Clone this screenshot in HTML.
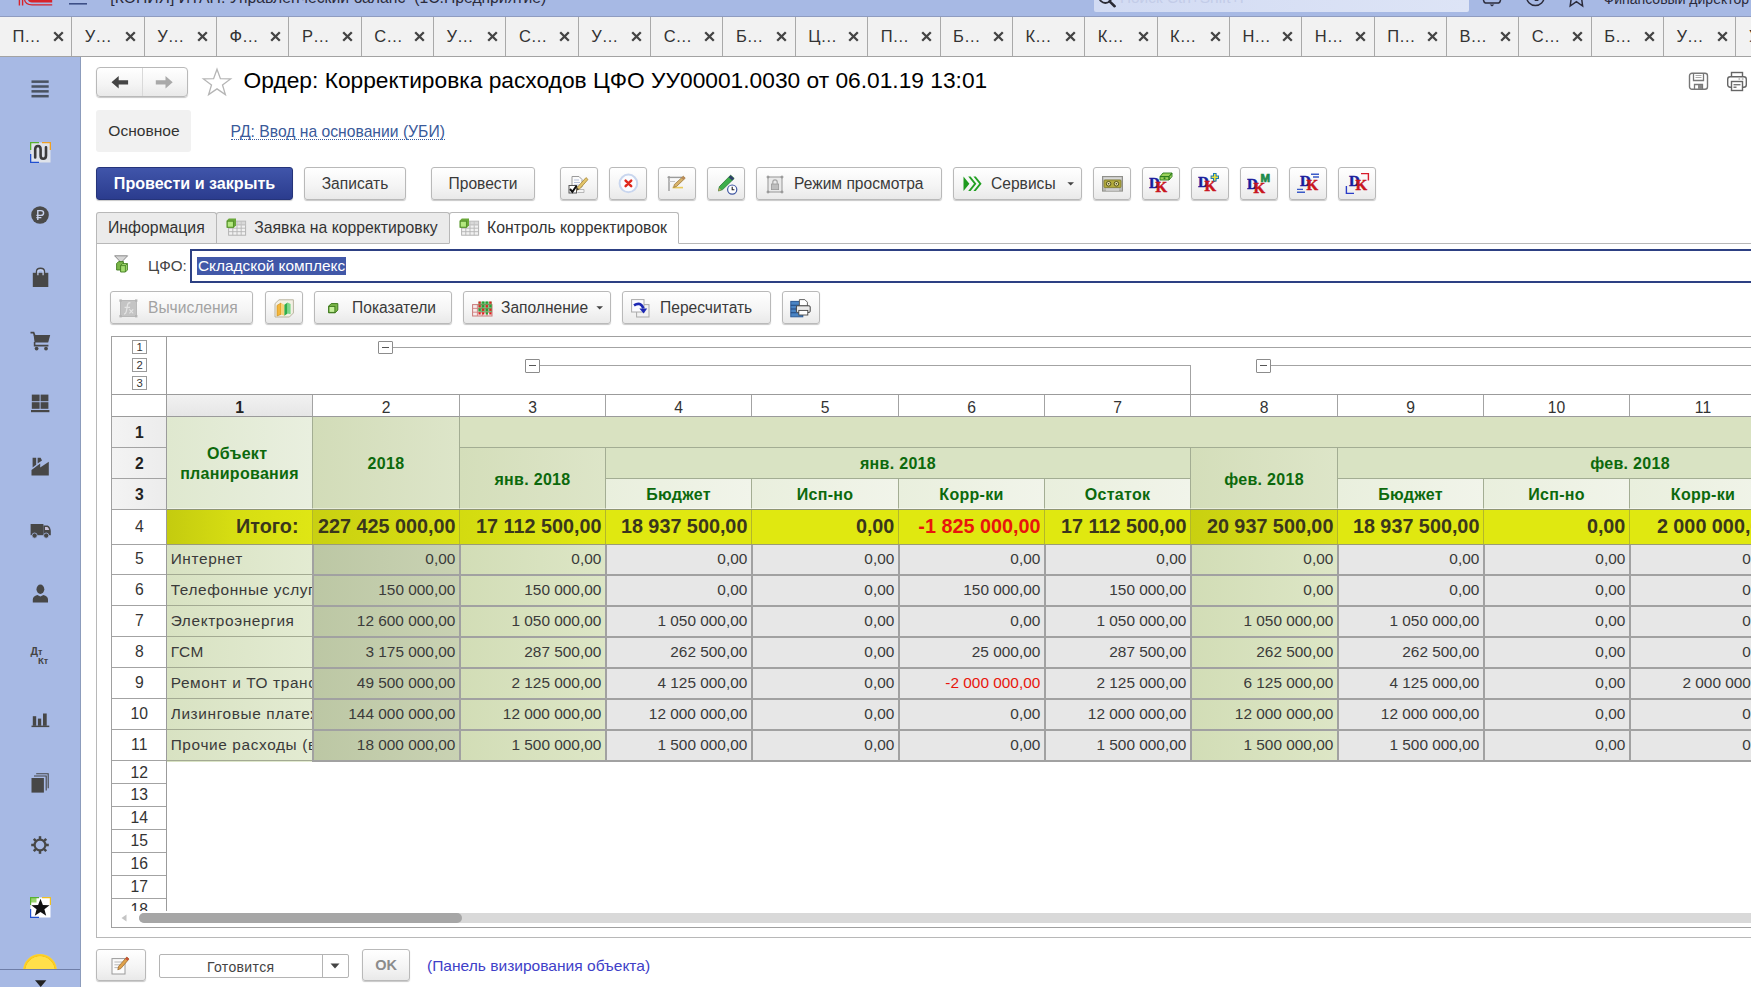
<!DOCTYPE html><html><head><meta charset="utf-8"><title>1C</title><style>
*{box-sizing:border-box;margin:0;padding:0}
html,body{width:1751px;height:987px;overflow:hidden;background:#fff}
body{font-family:"Liberation Sans",sans-serif;font-size:15.6px;color:#333;position:relative}
.abs{position:absolute}
.topbar{left:0;top:0;width:1751px;height:16px;background:#a7b9e4;overflow:hidden}
.tabsbar{left:0;top:16px;width:1751px;height:41px;background:#f2f2f2;border-top:1px solid #8f9cc0;border-bottom:1px solid #a3a3a3;overflow:hidden}
.tab{position:absolute;top:0;height:39px;border-right:1px solid #a9a9a9;font-size:17px;color:#333;line-height:39px;white-space:nowrap}
.tab .l{position:absolute;left:12.5px;top:0;font-size:16.5px}
.tab .x{position:absolute;left:52.5px;top:14px}
.sidebar{left:0;top:57px;width:80px;height:930px;background:#a7b9e4}
.btn{position:absolute;border:1px solid #b9b9b9;border-radius:3px;background:linear-gradient(#ffffff,#f4f4f4 60%,#e9e9e9);box-shadow:0 1px 1px rgba(0,0,0,.22);white-space:nowrap;color:#3a3a3a;text-align:center}
.btn.primary{background:linear-gradient(#4055aa,#2b3c8e);border-color:#25347a;color:#fff;font-weight:bold}
.t{position:absolute;white-space:nowrap}
</style></head><body>
<div class="abs topbar">
<svg class="abs" style="left:16px;top:0" width="80" height="10" viewBox="0 0 80 10"><path d="M3.4 0 V5.6 M6.6 0 V5.6" stroke="#d8232a" stroke-width="1.4" fill="none"/><path d="M12 0 Q12.6 2.4 16 2.4 H36.2 V0 Z" fill="#d8232a"/><path d="M8.6 0 Q9.4 4.8 16 4.8 H36.2" stroke="#d8232a" stroke-width="1.3" fill="none"/><path d="M53 3.8 H71" stroke="#3d4f86" stroke-width="1.6"/></svg>
<div class="t" style="left:110.3px;top:-10.6px;font-size:15.75px;color:#2b2b3a">[КОПИЯ] ИТАН: Управленческий баланс&nbsp; (1С:Предприятие)</div>
<div class="abs" style="left:1093.5px;top:-14px;width:375.5px;height:26.3px;background:linear-gradient(90deg,#d2dbf3,#dde4f6);border-radius:2px"></div>
<svg class="abs" style="left:1096px;top:0" width="22" height="8" viewBox="0 0 22 8"><circle cx="9.4" cy="-3.2" r="6.2" fill="none" stroke="#2b2b35" stroke-width="1.8"/><path d="M13.6 1.4 L18.6 6.2" stroke="#2b2b35" stroke-width="2.6" stroke-linecap="round"/></svg>
<div class="t" style="left:1120px;top:-10.6px;font-size:15.4px;color:#c3cce8">Поиск Ctrl+Shift+F</div>
<svg class="abs" style="left:1480px;top:0" width="110" height="9" viewBox="0 0 110 9"><path d="M3.4 0 Q4 2.6 5.4 3 H18.6 Q20 2.6 20.6 0" stroke="#2b2b3a" stroke-width="1.5" fill="none"/><path d="M9.6 4.6 H14.4 L12 6.4 Z" fill="#2b2b3a"/><path d="M46.6 -3.2 A8.8 8.8 0 0 0 64.2 -3.2" stroke="#2b2b3a" stroke-width="1.5" fill="none"/><path d="M55.4 -3 V0.4 H58.4" stroke="#2b2b3a" stroke-width="1.4" fill="none"/><path d="M91 0 L90.2 6 L96.4 1.6 L102.6 6 L101.8 0" stroke="#2b2b3a" stroke-width="1.5" fill="none"/></svg>
<div class="t" style="left:1603.5px;top:-9.5px;font-size:14px;color:#2b2b3a">Финансовый директор</div>
</div>
<div class="abs tabsbar">
<div class="tab" style="left:0.00px;width:72.35px"><span class="l">П…</span><svg class="x" width="11" height="11" viewBox="0 0 11 11"><path d="M1.2 1.2 L9.8 9.8 M9.8 1.2 L1.2 9.8" stroke="#444" stroke-width="2.3" fill="none"/></svg></div>
<div class="tab" style="left:72.35px;width:72.35px"><span class="l">У…</span><svg class="x" width="11" height="11" viewBox="0 0 11 11"><path d="M1.2 1.2 L9.8 9.8 M9.8 1.2 L1.2 9.8" stroke="#444" stroke-width="2.3" fill="none"/></svg></div>
<div class="tab" style="left:144.70px;width:72.35px"><span class="l">У…</span><svg class="x" width="11" height="11" viewBox="0 0 11 11"><path d="M1.2 1.2 L9.8 9.8 M9.8 1.2 L1.2 9.8" stroke="#444" stroke-width="2.3" fill="none"/></svg></div>
<div class="tab" style="left:217.05px;width:72.35px"><span class="l">Ф…</span><svg class="x" width="11" height="11" viewBox="0 0 11 11"><path d="M1.2 1.2 L9.8 9.8 M9.8 1.2 L1.2 9.8" stroke="#444" stroke-width="2.3" fill="none"/></svg></div>
<div class="tab" style="left:289.40px;width:72.35px"><span class="l">Р…</span><svg class="x" width="11" height="11" viewBox="0 0 11 11"><path d="M1.2 1.2 L9.8 9.8 M9.8 1.2 L1.2 9.8" stroke="#444" stroke-width="2.3" fill="none"/></svg></div>
<div class="tab" style="left:361.75px;width:72.35px"><span class="l">С…</span><svg class="x" width="11" height="11" viewBox="0 0 11 11"><path d="M1.2 1.2 L9.8 9.8 M9.8 1.2 L1.2 9.8" stroke="#444" stroke-width="2.3" fill="none"/></svg></div>
<div class="tab" style="left:434.10px;width:72.35px"><span class="l">У…</span><svg class="x" width="11" height="11" viewBox="0 0 11 11"><path d="M1.2 1.2 L9.8 9.8 M9.8 1.2 L1.2 9.8" stroke="#444" stroke-width="2.3" fill="none"/></svg></div>
<div class="tab" style="left:506.45px;width:72.35px"><span class="l">С…</span><svg class="x" width="11" height="11" viewBox="0 0 11 11"><path d="M1.2 1.2 L9.8 9.8 M9.8 1.2 L1.2 9.8" stroke="#444" stroke-width="2.3" fill="none"/></svg></div>
<div class="tab" style="left:578.80px;width:72.35px"><span class="l">У…</span><svg class="x" width="11" height="11" viewBox="0 0 11 11"><path d="M1.2 1.2 L9.8 9.8 M9.8 1.2 L1.2 9.8" stroke="#444" stroke-width="2.3" fill="none"/></svg></div>
<div class="tab" style="left:651.15px;width:72.35px"><span class="l">С…</span><svg class="x" width="11" height="11" viewBox="0 0 11 11"><path d="M1.2 1.2 L9.8 9.8 M9.8 1.2 L1.2 9.8" stroke="#444" stroke-width="2.3" fill="none"/></svg></div>
<div class="tab" style="left:723.50px;width:72.35px"><span class="l">Б…</span><svg class="x" width="11" height="11" viewBox="0 0 11 11"><path d="M1.2 1.2 L9.8 9.8 M9.8 1.2 L1.2 9.8" stroke="#444" stroke-width="2.3" fill="none"/></svg></div>
<div class="tab" style="left:795.85px;width:72.35px"><span class="l">Ц…</span><svg class="x" width="11" height="11" viewBox="0 0 11 11"><path d="M1.2 1.2 L9.8 9.8 M9.8 1.2 L1.2 9.8" stroke="#444" stroke-width="2.3" fill="none"/></svg></div>
<div class="tab" style="left:868.20px;width:72.35px"><span class="l">П…</span><svg class="x" width="11" height="11" viewBox="0 0 11 11"><path d="M1.2 1.2 L9.8 9.8 M9.8 1.2 L1.2 9.8" stroke="#444" stroke-width="2.3" fill="none"/></svg></div>
<div class="tab" style="left:940.55px;width:72.35px"><span class="l">Б…</span><svg class="x" width="11" height="11" viewBox="0 0 11 11"><path d="M1.2 1.2 L9.8 9.8 M9.8 1.2 L1.2 9.8" stroke="#444" stroke-width="2.3" fill="none"/></svg></div>
<div class="tab" style="left:1012.90px;width:72.35px"><span class="l">К…</span><svg class="x" width="11" height="11" viewBox="0 0 11 11"><path d="M1.2 1.2 L9.8 9.8 M9.8 1.2 L1.2 9.8" stroke="#444" stroke-width="2.3" fill="none"/></svg></div>
<div class="tab" style="left:1085.25px;width:72.35px"><span class="l">К…</span><svg class="x" width="11" height="11" viewBox="0 0 11 11"><path d="M1.2 1.2 L9.8 9.8 M9.8 1.2 L1.2 9.8" stroke="#444" stroke-width="2.3" fill="none"/></svg></div>
<div class="tab" style="left:1157.60px;width:72.35px"><span class="l">К…</span><svg class="x" width="11" height="11" viewBox="0 0 11 11"><path d="M1.2 1.2 L9.8 9.8 M9.8 1.2 L1.2 9.8" stroke="#444" stroke-width="2.3" fill="none"/></svg></div>
<div class="tab" style="left:1229.95px;width:72.35px"><span class="l">Н…</span><svg class="x" width="11" height="11" viewBox="0 0 11 11"><path d="M1.2 1.2 L9.8 9.8 M9.8 1.2 L1.2 9.8" stroke="#444" stroke-width="2.3" fill="none"/></svg></div>
<div class="tab" style="left:1302.30px;width:72.35px"><span class="l">Н…</span><svg class="x" width="11" height="11" viewBox="0 0 11 11"><path d="M1.2 1.2 L9.8 9.8 M9.8 1.2 L1.2 9.8" stroke="#444" stroke-width="2.3" fill="none"/></svg></div>
<div class="tab" style="left:1374.65px;width:72.35px"><span class="l">П…</span><svg class="x" width="11" height="11" viewBox="0 0 11 11"><path d="M1.2 1.2 L9.8 9.8 M9.8 1.2 L1.2 9.8" stroke="#444" stroke-width="2.3" fill="none"/></svg></div>
<div class="tab" style="left:1447.00px;width:72.35px"><span class="l">В…</span><svg class="x" width="11" height="11" viewBox="0 0 11 11"><path d="M1.2 1.2 L9.8 9.8 M9.8 1.2 L1.2 9.8" stroke="#444" stroke-width="2.3" fill="none"/></svg></div>
<div class="tab" style="left:1519.35px;width:72.35px"><span class="l">С…</span><svg class="x" width="11" height="11" viewBox="0 0 11 11"><path d="M1.2 1.2 L9.8 9.8 M9.8 1.2 L1.2 9.8" stroke="#444" stroke-width="2.3" fill="none"/></svg></div>
<div class="tab" style="left:1591.70px;width:72.35px"><span class="l">Б…</span><svg class="x" width="11" height="11" viewBox="0 0 11 11"><path d="M1.2 1.2 L9.8 9.8 M9.8 1.2 L1.2 9.8" stroke="#444" stroke-width="2.3" fill="none"/></svg></div>
<div class="tab" style="left:1664.05px;width:72.35px"><span class="l">У…</span><svg class="x" width="11" height="11" viewBox="0 0 11 11"><path d="M1.2 1.2 L9.8 9.8 M9.8 1.2 L1.2 9.8" stroke="#444" stroke-width="2.3" fill="none"/></svg></div>
<div class="tab" style="left:1736.40px;width:72.35px"><span class="l">У…</span><svg class="x" width="11" height="11" viewBox="0 0 11 11"><path d="M1.2 1.2 L9.8 9.8 M9.8 1.2 L1.2 9.8" stroke="#444" stroke-width="2.3" fill="none"/></svg></div>
</div>
<div class="abs sidebar"></div>
<div class="abs" style="left:80px;top:57px;width:1px;height:930px;background:#8c9cbc"></div>
<div class="btn" style="left:96px;top:67px;width:92px;height:30px;border-radius:4px"></div>
<div class="abs" style="left:142px;top:68px;width:1px;height:28px;background:#d9d9d9"></div>
<svg class="abs" style="left:110px;top:75px" width="20" height="14" viewBox="0 0 20 14"><path d="M1.5 7.3 L8.7 1 V5.3 H18.1 V9.4 H8.7 V13.6 Z" fill="#444"/></svg>
<svg class="abs" style="left:155px;top:75px" width="20" height="14" viewBox="0 0 20 14"><path d="M17.7 7.3 L10.5 1 V5.3 H0.8 V9.4 H10.5 V13.6 Z" fill="#a9a9a9"/></svg>
<svg class="abs" style="left:201px;top:67px" width="32" height="30" viewBox="0 0 32 30"><path d="M16 2.2 L19.4 11.6 L29.6 11.9 L21.5 18 L24.4 27.6 L16 21.9 L7.6 27.6 L10.5 18 L2.4 11.9 L12.6 11.6 Z" fill="#fff" stroke="#b5b5b5" stroke-width="1.3" stroke-linejoin="miter"/></svg>
<div class="t" style="left:243.6px;top:67.1px;font-size:22.75px;color:#000;">Ордер: Корректировка расходов ЦФО УУ00001.0030 от 06.01.19 13:01</div>
<svg class="abs" style="left:1688px;top:72px" width="21" height="19" viewBox="0 0 21 19"><rect x="1.5" y="1.2" width="18" height="16" rx="2.5" fill="#fff" stroke="#777" stroke-width="1.4"/><path d="M5.5 1.5 V8.5 H15.5 V1.5" fill="none" stroke="#777" stroke-width="1.3"/><path d="M7.5 3.5 H13.5 M7.5 5.5 H13.5" stroke="#aaa" stroke-width="1"/><path d="M6.5 17 V12.5 H14.5 V17" fill="none" stroke="#777" stroke-width="1.3"/><rect x="10" y="13" width="4" height="4" fill="#888"/></svg>
<svg class="abs" style="left:1726px;top:71px" width="22" height="21" viewBox="0 0 22 21"><rect x="5.5" y="1.5" width="11" height="5" fill="#fff" stroke="#666" stroke-width="1.4"/><rect x="1.7" y="5.7" width="18.6" height="10.6" rx="2.5" fill="#fff" stroke="#666" stroke-width="1.4"/><rect x="5.5" y="10.5" width="11" height="9" fill="#fff" stroke="#666" stroke-width="1.4"/><path d="M7.5 13.7 H14.5" stroke="#777" stroke-width="1.4"/><path d="M7.5 16.2 H10.5" stroke="#555" stroke-width="1.2"/><path d="M12.5 8 H14.2 M15.8 8 H17.5" stroke="#888" stroke-width="1.2"/></svg>
<div class="abs" style="left:96px;top:110.3px;width:95px;height:41.3px;background:#f1f1f1;border-radius:3px"></div>
<div class="t" style="left:108.3px;top:121.6px;font-size:15.55px;color:#333;">Основное</div>
<div class="t" style="left:230.5px;top:123.8px;font-size:15.7px;color:#3a5a9a;border-bottom:1px dotted #3a5a9a;line-height:15.8px;height:16.6px">РД: Ввод на основании (УБИ)</div>
<div class="btn primary" style="left:96.0px;top:167.0px;width:197.0px;height:33.0px;"><span style="line-height:31px;font-size:16.1px">Провести и закрыть</span></div>
<div class="btn " style="left:304.0px;top:167.0px;width:102.0px;height:33.0px;"><span style="line-height:31px">Записать</span></div>
<div class="btn " style="left:431.0px;top:167.0px;width:104.0px;height:33.0px;"><span style="line-height:31px">Провести</span></div>
<div class="btn " style="left:560.0px;top:167.0px;width:38.0px;height:33.0px;"></div>
<div class="btn " style="left:609.0px;top:167.0px;width:38.0px;height:33.0px;"></div>
<div class="btn " style="left:658.0px;top:167.0px;width:38.0px;height:33.0px;"></div>
<div class="btn " style="left:707.0px;top:167.0px;width:38.0px;height:33.0px;"></div>
<div class="btn " style="left:756.0px;top:167.0px;width:186.0px;height:33.0px;"><span style="line-height:31px;position:absolute;left:37px">Режим просмотра</span></div>
<div class="btn " style="left:953.0px;top:167.0px;width:129.0px;height:33.0px;"><span style="line-height:31px;position:absolute;left:37px">Сервисы</span></div>
<div class="btn " style="left:1093.0px;top:167.0px;width:38.0px;height:33.0px;"></div>
<div class="btn " style="left:1142.0px;top:167.0px;width:38.0px;height:33.0px;"></div>
<div class="btn " style="left:1191.0px;top:167.0px;width:38.0px;height:33.0px;"></div>
<div class="btn " style="left:1240.0px;top:167.0px;width:38.0px;height:33.0px;"></div>
<div class="btn " style="left:1289.0px;top:167.0px;width:38.0px;height:33.0px;"></div>
<div class="btn " style="left:1338.0px;top:167.0px;width:38.0px;height:33.0px;"></div>
<svg class="abs" style="left:568.0px;top:175.0px" width="22" height="20" viewBox="0 0 22 20">
<path d="M4 1.5 H11 L14 4.5 V12 H4 Z" fill="#fbfbfb" stroke="#9a9a9a" stroke-width="1"/>
<path d="M6 5 H11 M6 7.5 H12 M6 10 H12" stroke="#b9c3dc" stroke-width="1"/>
<rect x="1" y="10.5" width="7.5" height="7.5" fill="#fff" stroke="#555" stroke-width="1"/>
<path d="M2 14 L4.4 16.8 L8.6 10.8" stroke="#111" stroke-width="2" fill="none"/>
<path d="M9 14.5 H16 V17.5 H9.5" fill="#f4f4f4" stroke="#aaa" stroke-width="0.8"/>
<path d="M20 4.5 L18 2.6 L9.6 12 L8.8 15.2 L11.8 13.8 Z" fill="#e3c56a" stroke="#a58538" stroke-width="0.8"/>
<path d="M8.8 15.2 L9.4 12.8 L11 14.2 Z" fill="#333"/>
</svg>
<svg class="abs" style="left:617.5px;top:173.0px" width="21" height="21" viewBox="0 0 21 21">
<circle cx="10.4" cy="10.4" r="8.8" fill="#fbfcff" stroke="#c9d6ee" stroke-width="2"/>
<path d="M7.6 7.6 L13.2 13.2 M13.2 7.6 L7.6 13.2" stroke="#e0281c" stroke-width="2.5" stroke-linecap="round"/>
</svg>
<svg class="abs" style="left:667.0px;top:175.0px" width="21" height="18" viewBox="0 0 21 18">
<path d="M2 1 V16" stroke="#9b9b9b" stroke-width="1.4"/>
<path d="M0.5 2.4 H16" stroke="#9b9b9b" stroke-width="1.4"/>
<path d="M2 6.5 H8" stroke="#c4c4c4" stroke-width="1"/>
<path d="M5.5 12.6 H16" stroke="#e8c95a" stroke-width="1.6"/>
<path d="M18.2 3.2 L16.4 1.2 L7.4 9.4 L6.6 12.4 L9.6 11.4 Z" fill="#d9b36a" stroke="#9c7a3c" stroke-width="0.8"/>
<path d="M18.2 3.2 L16.4 1.2 L14.4 3 L16.2 5 Z" fill="#b98a5a"/>
</svg>
<svg class="abs" style="left:715.5px;top:173.5px" width="23" height="22" viewBox="0 0 23 22">
<path d="M14.6 1.2 L18.2 4.4 L6.6 15.6 L2.4 17 L3.4 12.6 Z" fill="#3cae4a" stroke="#2a7a34" stroke-width="0.8"/>
<path d="M14.6 1.2 L18.2 4.4 L16.2 6.4 L12.6 3.2 Z" fill="#2f3e6a"/>
<path d="M2.4 17 L3.1 14 L5.2 16 Z" fill="#c9a45a"/>
<circle cx="16.2" cy="15.6" r="4.6" fill="#fff" stroke="#3d55a0" stroke-width="1.2"/>
<path d="M16.2 12.8 V15.8 H18.4" stroke="#222" stroke-width="1.1" fill="none"/>
</svg>
<svg class="abs" style="left:765.5px;top:174.5px" width="18" height="19" viewBox="0 0 18 19">
<rect x="2" y="2" width="14" height="15" fill="#e9e9e9" stroke="#a5a5a5" stroke-width="1.2"/>
<path d="M0.5 2 H3.5 M2 0.5 V3.5 M14.5 2 H17.5 M16 0.5 V3.5 M0.5 17 H3.5 M2 15.5 V18.5 M14.5 17 H17.5 M16 15.5 V18.5" stroke="#8e8e8e" stroke-width="1"/>
<rect x="5.4" y="9" width="7.2" height="5.6" fill="#bdbdbd" stroke="#9a9a9a" stroke-width="0.8"/>
<path d="M6.8 9 V7 Q6.8 4.8 9 4.8 Q11.2 4.8 11.2 7 V9" stroke="#a6a6a6" stroke-width="1.2" fill="none"/>
</svg>
<svg class="abs" style="left:962.5px;top:176.0px" width="19" height="16" viewBox="0 0 19 16">
<path d="M0.5 0.6 L6.4 7.8 L0.5 15 Z" fill="#1e9a1e"/>
<path d="M5.2 0.6 H7.6 L13.4 7.8 L7.6 15 H5.2 L11 7.8 Z" fill="#22a022"/>
<path d="M10.4 0.6 H12.8 L18.6 7.8 L12.8 15 H10.4 L16.2 7.8 Z" fill="#22a022"/>
</svg>
<svg class="abs" style="left:1066.5px;top:182.3px" width="8" height="4" viewBox="0 0 8 4"><path d="M0.4 0.2 H7 L3.7 3.6 Z" fill="#444"/></svg>
<svg class="abs" style="left:1101.5px;top:176.0px" width="21" height="16" viewBox="0 0 21 16">
<rect x="0.5" y="0.5" width="20" height="14.6" fill="#b9b9b4" stroke="#8f8f8a" stroke-width="1"/>
<rect x="1.6" y="1.4" width="17.8" height="2" fill="#d8d8d8"/>
<rect x="2" y="4" width="17" height="7.6" rx="1" fill="#b2aa3c" stroke="#7e7a2a" stroke-width="0.8"/>
<circle cx="6.6" cy="7.8" r="2.3" fill="#e9e4a0" stroke="#55521c" stroke-width="1"/><circle cx="14.4" cy="7.8" r="2.3" fill="#e9e4a0" stroke="#55521c" stroke-width="1"/>
<circle cx="6.6" cy="7.8" r="0.8" fill="#333"/><circle cx="14.4" cy="7.8" r="0.8" fill="#333"/>
<rect x="4" y="12.4" width="13" height="2.4" fill="#cfcfcf"/>
</svg>
<svg class="abs" style="left:1149.0px;top:172.0px" width="26" height="24" viewBox="0 0 26 24">
<text x="0.0" y="16.0" font-family="Liberation Serif" font-weight="bold" font-size="15" fill="#1c1c9c" stroke="#1c1c9c" stroke-width="0.5">D</text>
<text x="6.5" y="20.0" font-family="Liberation Serif" font-weight="bold" font-size="15" fill="#c81420" stroke="#c81420" stroke-width="0.5">K</text>
<path d="M11 4.6 L14 1 H23 L20 4.6 Z M11 4.6 H20 V8 H11 Z M20 4.6 L23 1 V4.6 L20 8 Z" fill="#9ad05a" stroke="#2a7a1c" stroke-width="0.9"/><circle cx="15.5" cy="6.3" r="1" fill="#2a7a1c"/></svg>
<svg class="abs" style="left:1198.0px;top:172.0px" width="26" height="24" viewBox="0 0 26 24">
<text x="0.0" y="15.0" font-family="Liberation Serif" font-weight="bold" font-size="15" fill="#1c1c9c" stroke="#1c1c9c" stroke-width="0.5">D</text>
<text x="6.5" y="19.0" font-family="Liberation Serif" font-weight="bold" font-size="15" fill="#c81420" stroke="#c81420" stroke-width="0.5">K</text>
<path d="M16.8 1 V9.4 M12.6 5.2 H21" stroke="#1c7ab0" stroke-width="3.6"/><path d="M16.8 2 V8.4 M13.6 5.2 H20" stroke="#e8e040" stroke-width="1.6"/></svg>
<svg class="abs" style="left:1247.0px;top:172.0px" width="26" height="24" viewBox="0 0 26 24">
<text x="0.0" y="17.0" font-family="Liberation Serif" font-weight="bold" font-size="15" fill="#1c1c9c" stroke="#1c1c9c" stroke-width="0.5">D</text>
<text x="6.5" y="21.0" font-family="Liberation Serif" font-weight="bold" font-size="15" fill="#c81420" stroke="#c81420" stroke-width="0.5">K</text>
<text x="13.4" y="10" font-family="Liberation Sans" font-weight="bold" font-size="11.5" fill="#1c8a4a" stroke="#1c8a4a" stroke-width="0.7">M</text></svg>
<svg class="abs" style="left:1296.0px;top:172.0px" width="26" height="24" viewBox="0 0 26 24">
<text x="4.0" y="14.0" font-family="Liberation Serif" font-weight="bold" font-size="15" fill="#1c1c9c" stroke="#1c1c9c" stroke-width="0.5">D</text>
<text x="10.5" y="18.0" font-family="Liberation Serif" font-weight="bold" font-size="15" fill="#c81420" stroke="#c81420" stroke-width="0.5">K</text>
<path d="M15 2.2 H23 M17 5 H23" stroke="#3a5ac8" stroke-width="1.4"/><path d="M1 17.4 H7 M1 20.2 H9" stroke="#3a5ac8" stroke-width="1.4"/></svg>
<svg class="abs" style="left:1345.0px;top:172.0px" width="26" height="24" viewBox="0 0 26 24">
<text x="4.0" y="14.0" font-family="Liberation Serif" font-weight="bold" font-size="15" fill="#1c1c9c" stroke="#1c1c9c" stroke-width="0.5">D</text>
<text x="10.5" y="18.0" font-family="Liberation Serif" font-weight="bold" font-size="15" fill="#c81420" stroke="#c81420" stroke-width="0.5">K</text>
<path d="M16 1.6 H23.4 V8.4" stroke="#d81c2c" stroke-width="1.4" fill="none"/><path d="M1.4 14 V21.4 H9" stroke="#2a3cc8" stroke-width="1.4" fill="none"/></svg>
<div class="abs" style="left:96px;top:243px;width:1660px;height:695px;border:1px solid #b8b8b8;border-right:none;background:#fff"></div>
<div class="abs" style="left:96.0px;top:212px;width:121.0px;background:#ebebeb;border:1px solid #b8b8b8;border-bottom:none;height:31px;border-radius:3px 3px 0 0"></div>
<div class="abs" style="left:216.0px;top:212px;width:234.0px;background:#ebebeb;border:1px solid #b8b8b8;border-bottom:none;height:31px;border-radius:3px 3px 0 0"></div>
<div class="abs" style="left:449.0px;top:212px;width:230.0px;background:#fff;border:1px solid #b8b8b8;border-bottom:1px solid #fff;height:32px;border-radius:3px 3px 0 0"></div>
<div class="t" style="left:108.0px;top:218.8px;font-size:15.8px;color:#333;">Информация</div>
<div class="t" style="left:254.3px;top:218.8px;font-size:15.75px;color:#333;">Заявка на корректировку</div>
<div class="t" style="left:487.0px;top:218.8px;font-size:15.8px;color:#333;">Контроль корректировок</div>
<svg class="abs" style="left:225.6px;top:218.0px" width="21" height="18" viewBox="0 0 21 18">
<rect x="2.6" y="3.2" width="17" height="14" fill="#f1f1f1" stroke="#b3b3b3" stroke-width="1"/>
<path d="M2.6 6.7 H19.6 M2.6 10.2 H19.6 M2.6 13.7 H19.6 M6.8 3.2 V17.2 M11 3.2 V17.2 M15.2 3.2 V17.2" stroke="#b4b4b4" stroke-width="0.9"/>
<rect x="8.2" y="3.2" width="11.4" height="4.6" fill="#c9c9c9" opacity="0.6"/>
<path d="M0.6 2.8 L2.8 0.6 H10 V7.6 L7.8 9.8 H0.6 Z" fill="#6aa83a"/>
<rect x="1.2" y="3.2" width="6.2" height="6" fill="#b4e880" stroke="#4c8a24" stroke-width="0.9"/>
</svg>
<svg class="abs" style="left:458.6px;top:218.0px" width="21" height="18" viewBox="0 0 21 18">
<rect x="2.6" y="3.2" width="17" height="14" fill="#f1f1f1" stroke="#b3b3b3" stroke-width="1"/>
<path d="M2.6 6.7 H19.6 M2.6 10.2 H19.6 M2.6 13.7 H19.6 M6.8 3.2 V17.2 M11 3.2 V17.2 M15.2 3.2 V17.2" stroke="#b4b4b4" stroke-width="0.9"/>
<rect x="8.2" y="3.2" width="11.4" height="4.6" fill="#c9c9c9" opacity="0.6"/>
<path d="M0.6 2.8 L2.8 0.6 H10 V7.6 L7.8 9.8 H0.6 Z" fill="#6aa83a"/>
<rect x="1.2" y="3.2" width="6.2" height="6" fill="#b4e880" stroke="#4c8a24" stroke-width="0.9"/>
</svg>
<svg class="abs" style="left:114.3px;top:255.0px" width="15" height="18" viewBox="0 0 15 18">
<path d="M0.6 0.8 H13.6 L8.6 6 V10 H5.6 V6 Z" fill="#d6d6d6" stroke="#8a8a8a" stroke-width="1"/>
<path d="M2.6 8.6 L4.6 6.6 H9.4 V13 L7.4 15 H2.6 Z" fill="#7ab648" stroke="#3f7a1e" stroke-width="0.9"/>
<path d="M6.6 10.6 L8.6 8.6 H13.4 V15 L11.4 17 H6.6 Z" fill="#a4dc70" stroke="#3f7a1e" stroke-width="0.9"/>
<path d="M6.6 10.6 H11.4 V17 M11.4 10.6 L13.4 8.6" stroke="#3f7a1e" stroke-width="0.8" fill="none"/>
</svg>
<div class="t" style="left:148.0px;top:256.5px;font-size:15.2px;color:#444;">ЦФО:</div>
<div class="abs" style="left:190px;top:249px;width:1570px;height:34px;border:2px solid #2d4083;background:#fff"></div>
<div class="abs" style="left:197px;top:257px;width:148.5px;height:18px;background:#4158a8"></div>
<div class="t" style="left:198.0px;top:257.0px;font-size:15.4px;color:#fff;line-height:18px;">Складской комплекс</div>
<div class="btn " style="left:110.0px;top:291.0px;width:143.0px;height:33.0px;"><span style="line-height:31px;position:absolute;left:37px;color:#a3a3a3">Вычисления</span></div>
<div class="btn " style="left:265.0px;top:291.0px;width:38.0px;height:33.0px;"></div>
<div class="btn " style="left:314.0px;top:291.0px;width:138.0px;height:33.0px;"><span style="line-height:31px;position:absolute;left:37px">Показатели</span></div>
<div class="btn " style="left:463.0px;top:291.0px;width:148.0px;height:33.0px;"><span style="line-height:31px;position:absolute;left:37px">Заполнение</span></div>
<div class="btn " style="left:622.0px;top:291.0px;width:149.0px;height:33.0px;"><span style="line-height:31px;position:absolute;left:37px">Пересчитать</span></div>
<div class="btn " style="left:782.0px;top:291.0px;width:38.0px;height:33.0px;"></div>
<svg class="abs" style="left:119.3px;top:298.8px" width="19" height="19" viewBox="0 0 19 19">
<rect x="1.4" y="1.4" width="16" height="16" fill="#c4c4c4" stroke="#b0b0b0" stroke-width="0.8"/>
<rect x="0.4" y="0.4" width="2.4" height="2.4" fill="#b3b3b3"/><rect x="16" y="0.4" width="2.4" height="2.4" fill="#b3b3b3"/><rect x="0.4" y="16" width="2.4" height="2.4" fill="#b3b3b3"/><rect x="16" y="16" width="2.4" height="2.4" fill="#b3b3b3"/>
<path d="M5 15 Q7 15 7.6 11 L8.6 5.6 Q9.2 3.4 11.4 3.8 M5.6 8.4 H11" stroke="#e4e4e4" stroke-width="1.3" fill="none"/>
<path d="M10.4 10.4 L14.2 14.4 M14.2 10.4 L10.4 14.4" stroke="#e4e4e4" stroke-width="1.1"/>
</svg>
<svg class="abs" style="left:273.8px;top:298.6px" width="21" height="19" viewBox="0 0 21 19">
<path d="M1 4.6 L5 0.8 H19.4 V14 L15.4 18 H1 Z" fill="#f3f0e4" stroke="#b9b4a0" stroke-width="1"/>
<path d="M3 6.4 L7 4 V15.4 L3 17 Z" fill="#f4b63a" stroke="#c88a1c" stroke-width="0.6"/>
<path d="M7 4 L10.4 5.8 V16.8 L7 15.4 Z" fill="#f7d27a"/>
<path d="M10.4 5.8 L13.6 3.4 V14.4 L10.4 16.8 Z" fill="#2fae4a"/>
<path d="M13.6 3.4 L16.6 5 V15.2 L13.6 14.4 Z" fill="#7ad88a"/>
</svg>
<svg class="abs" style="left:328.0px;top:302.8px" width="11" height="11" viewBox="0 0 11 11">
<path d="M0.6 3.2 L3.2 0.6 H9.8 V7 L7.2 9.8 H0.6 Z" fill="#7ab648" stroke="#3f7a1e" stroke-width="1"/>
<rect x="0.9" y="3.4" width="6" height="6" fill="#c6f09a" stroke="#3f7a1e" stroke-width="1"/>
</svg>
<svg class="abs" style="left:472.0px;top:301.4px" width="21" height="16" viewBox="0 0 21 16">
<rect x="0.6" y="3.6" width="19.4" height="11.4" fill="#f6eaea" stroke="#c87878" stroke-width="1"/>
<path d="M0.6 7.4 H20 M0.6 11.2 H20 M5.4 3.6 V15 M10.2 3.6 V15 M15 3.6 V15" stroke="#d08080" stroke-width="0.9"/>
<rect x="6.4" y="0.6" width="13.6" height="10.6" fill="#2fa03a" opacity="0.55"/>
<rect x="6.5" y="0.5" width="2.2" height="2.2" fill="#e02020"/><rect x="10.1" y="0.5" width="2.2" height="2.2" fill="#20a030"/><rect x="13.7" y="0.5" width="2.2" height="2.2" fill="#20a030"/><rect x="17.3" y="0.5" width="2.2" height="2.2" fill="#e02020"/><rect x="6.5" y="4.1" width="2.2" height="2.2" fill="#e02020"/><rect x="10.1" y="4.1" width="2.2" height="2.2" fill="#20a030"/><rect x="13.7" y="4.1" width="2.2" height="2.2" fill="#e02020"/><rect x="17.3" y="4.1" width="2.2" height="2.2" fill="#20a030"/><rect x="6.5" y="7.7" width="2.2" height="2.2" fill="#20a030"/><rect x="10.1" y="7.7" width="2.2" height="2.2" fill="#e02020"/><rect x="13.7" y="7.7" width="2.2" height="2.2" fill="#20a030"/><rect x="17.3" y="7.7" width="2.2" height="2.2" fill="#e02020"/><rect x="6.5" y="11.3" width="2.2" height="2.2" fill="#e02020"/><rect x="10.1" y="11.3" width="2.2" height="2.2" fill="#e02020"/><rect x="13.7" y="11.3" width="2.2" height="2.2" fill="#20a030"/><rect x="17.3" y="11.3" width="2.2" height="2.2" fill="#e02020"/></svg>
<svg class="abs" style="left:595.8px;top:306.4px" width="8" height="4" viewBox="0 0 8 4"><path d="M0.4 0.2 H7 L3.7 3.6 Z" fill="#444"/></svg>
<svg class="abs" style="left:631.4px;top:298.6px" width="19" height="19" viewBox="0 0 19 19">
<rect x="5.6" y="5.6" width="12.4" height="12.4" fill="#f1f1f1" stroke="#a9a9a9" stroke-width="1"/>
<rect x="0.6" y="0.6" width="12.4" height="12.4" fill="#fbfbff" stroke="#a9a9a9" stroke-width="1"/>
<path d="M3 6.4 Q9.6 2.2 12.4 9.4" stroke="#1c28b4" stroke-width="2.6" fill="none"/>
<path d="M8.4 9.6 H16.2 L12.6 14.6 Z" fill="#1c28b4"/>
</svg>
<svg class="abs" style="left:790.4px;top:298.6px" width="21" height="19" viewBox="0 0 21 19">
<rect x="0.8" y="2.4" width="12" height="15.4" fill="#4a84c4" stroke="#2c5a96" stroke-width="1"/>
<path d="M0.8 6.2 H12.8 M0.8 10 H12.8 M0.8 13.8 H12.8" stroke="#22477c" stroke-width="1.1"/>
<path d="M9.4 0.6 H14.8 L17.4 3.2 V7 H9.4 Z" fill="#fff" stroke="#555" stroke-width="0.9"/>
<rect x="6.4" y="6.8" width="13.8" height="6.6" rx="1.2" fill="#e9e9e9" stroke="#444" stroke-width="1"/>
<rect x="8.8" y="11.4" width="9" height="4.6" fill="#fff" stroke="#444" stroke-width="0.9"/>
</svg>
<div class="abs" style="left:110.5px;top:336px;width:1660px;height:591.5px;border:1px solid #a0a0a0;border-right:none;background:#fff;overflow:hidden"></div>
<div class="abs" id="tbl" style="left:111.5px;top:337px;width:1640px;height:573.5px;overflow:hidden">
<div class="abs" style="left:54.50px;top:0.00px;width:1.00px;height:57.00px;background:#9b9b9b"></div>
<div class="abs" style="left:20.80px;top:3.40px;width:14.50px;height:13.90px;border:1px solid #9a9a9a;background:#fff;font-size:11.3px;line-height:12.4px;text-align:center;color:#333">1</div>
<div class="abs" style="left:20.80px;top:21.40px;width:14.50px;height:13.90px;border:1px solid #9a9a9a;background:#fff;font-size:11.3px;line-height:12.4px;text-align:center;color:#333">2</div>
<div class="abs" style="left:20.80px;top:39.40px;width:14.50px;height:13.90px;border:1px solid #9a9a9a;background:#fff;font-size:11.3px;line-height:12.4px;text-align:center;color:#333">3</div>
<div class="abs" style="left:281.00px;top:10.00px;width:1367.50px;height:1.00px;background:#a3a3a3"></div>
<div class="abs" style="left:266.80px;top:3.80px;width:14.60px;height:13.60px;border:1px solid #8c8c8c;background:#fff;border-radius:1px"><div class="abs" style="left:2.5px;top:5.3px;width:7.6px;height:1px;background:#555"></div></div>
<div class="abs" style="left:428.00px;top:28.00px;width:651.50px;height:1.00px;background:#a3a3a3"></div>
<div class="abs" style="left:1078.50px;top:28.00px;width:1.00px;height:29.00px;background:#a3a3a3"></div>
<div class="abs" style="left:413.50px;top:22.00px;width:14.60px;height:13.60px;border:1px solid #8c8c8c;background:#fff;border-radius:1px"><div class="abs" style="left:2.5px;top:5.3px;width:7.6px;height:1px;background:#555"></div></div>
<div class="abs" style="left:1159.00px;top:28.00px;width:489.50px;height:1.00px;background:#a3a3a3"></div>
<div class="abs" style="left:1144.80px;top:22.00px;width:14.60px;height:13.60px;border:1px solid #8c8c8c;background:#fff;border-radius:1px"><div class="abs" style="left:2.5px;top:5.3px;width:7.6px;height:1px;background:#555"></div></div>
<div class="abs" style="left:-0.50px;top:57.00px;width:1649.00px;height:1.00px;background:#9b9b9b"></div>
<div class="abs" style="left:-0.50px;top:79.00px;width:1649.00px;height:1.00px;background:#9b9b9b"></div>
<div class="abs" style="left:55.50px;top:58.00px;width:145.00px;height:21.00px;background:linear-gradient(#f1f1f1,#e6e6e6)"></div>
<div class="abs" style="left:200.50px;top:58.00px;width:1.00px;height:21.00px;background:#a3a3a3"></div>
<div class="abs" style="left:55.50px;top:59.70px;width:145.00px;height:21.00px;text-align:center;line-height:21.5px;font-size:15.7px;font-weight:bold;color:#222">1</div>
<div class="abs" style="left:347.50px;top:58.00px;width:1.00px;height:21.00px;background:#a3a3a3"></div>
<div class="abs" style="left:201.50px;top:59.70px;width:146.00px;height:21.00px;text-align:center;line-height:21.5px;font-size:15.7px;font-weight:normal;color:#333">2</div>
<div class="abs" style="left:493.50px;top:58.00px;width:1.00px;height:21.00px;background:#a3a3a3"></div>
<div class="abs" style="left:348.50px;top:59.70px;width:145.00px;height:21.00px;text-align:center;line-height:21.5px;font-size:15.7px;font-weight:normal;color:#333">3</div>
<div class="abs" style="left:639.50px;top:58.00px;width:1.00px;height:21.00px;background:#a3a3a3"></div>
<div class="abs" style="left:494.50px;top:59.70px;width:145.00px;height:21.00px;text-align:center;line-height:21.5px;font-size:15.7px;font-weight:normal;color:#333">4</div>
<div class="abs" style="left:786.50px;top:58.00px;width:1.00px;height:21.00px;background:#a3a3a3"></div>
<div class="abs" style="left:640.50px;top:59.70px;width:146.00px;height:21.00px;text-align:center;line-height:21.5px;font-size:15.7px;font-weight:normal;color:#333">5</div>
<div class="abs" style="left:932.50px;top:58.00px;width:1.00px;height:21.00px;background:#a3a3a3"></div>
<div class="abs" style="left:787.50px;top:59.70px;width:145.00px;height:21.00px;text-align:center;line-height:21.5px;font-size:15.7px;font-weight:normal;color:#333">6</div>
<div class="abs" style="left:1078.50px;top:58.00px;width:1.00px;height:21.00px;background:#a3a3a3"></div>
<div class="abs" style="left:933.50px;top:59.70px;width:145.00px;height:21.00px;text-align:center;line-height:21.5px;font-size:15.7px;font-weight:normal;color:#333">7</div>
<div class="abs" style="left:1225.50px;top:58.00px;width:1.00px;height:21.00px;background:#a3a3a3"></div>
<div class="abs" style="left:1079.50px;top:59.70px;width:146.00px;height:21.00px;text-align:center;line-height:21.5px;font-size:15.7px;font-weight:normal;color:#333">8</div>
<div class="abs" style="left:1371.50px;top:58.00px;width:1.00px;height:21.00px;background:#a3a3a3"></div>
<div class="abs" style="left:1226.50px;top:59.70px;width:145.00px;height:21.00px;text-align:center;line-height:21.5px;font-size:15.7px;font-weight:normal;color:#333">9</div>
<div class="abs" style="left:1517.50px;top:58.00px;width:1.00px;height:21.00px;background:#a3a3a3"></div>
<div class="abs" style="left:1372.50px;top:59.70px;width:145.00px;height:21.00px;text-align:center;line-height:21.5px;font-size:15.7px;font-weight:normal;color:#333">10</div>
<div class="abs" style="left:1664.50px;top:58.00px;width:1.00px;height:21.00px;background:#a3a3a3"></div>
<div class="abs" style="left:1518.50px;top:59.70px;width:146.00px;height:21.00px;text-align:center;line-height:21.5px;font-size:15.7px;font-weight:normal;color:#333">11</div>
<div class="abs" style="left:1810.50px;top:58.00px;width:1.00px;height:21.00px;background:#a3a3a3"></div>
<div class="abs" style="left:1665.50px;top:59.70px;width:145.00px;height:21.00px;text-align:center;line-height:21.5px;font-size:15.7px;font-weight:normal;color:#333">12</div>
<div class="abs" style="left:54.50px;top:57.00px;width:1.00px;height:517.00px;background:#9b9b9b"></div>
<div class="abs" style="left:0.00px;top:80.00px;width:54.50px;height:30.00px;background:linear-gradient(90deg,#f3f3f3,#ececec);"></div>
<div class="abs" style="left:0.00px;top:110.00px;width:54.50px;height:1.00px;background:#a3a3a3"></div>
<div class="abs" style="left:0.00px;top:80.00px;width:54.50px;height:30.00px;text-align:center;line-height:31.4px;font-size:15.7px;font-weight:bold;color:#222;padding-left:1px">1</div>
<div class="abs" style="left:0.00px;top:111.00px;width:54.50px;height:30.00px;background:linear-gradient(90deg,#f3f3f3,#ececec);"></div>
<div class="abs" style="left:0.00px;top:141.00px;width:54.50px;height:1.00px;background:#a3a3a3"></div>
<div class="abs" style="left:0.00px;top:111.00px;width:54.50px;height:30.00px;text-align:center;line-height:31.4px;font-size:15.7px;font-weight:bold;color:#222;padding-left:1px">2</div>
<div class="abs" style="left:0.00px;top:142.00px;width:54.50px;height:30.00px;background:linear-gradient(90deg,#f3f3f3,#ececec);"></div>
<div class="abs" style="left:0.00px;top:172.00px;width:54.50px;height:1.00px;background:#a3a3a3"></div>
<div class="abs" style="left:0.00px;top:142.00px;width:54.50px;height:30.00px;text-align:center;line-height:31.4px;font-size:15.7px;font-weight:bold;color:#222;padding-left:1px">3</div>
<div class="abs" style="left:0.00px;top:207.00px;width:54.50px;height:1.00px;background:#a3a3a3"></div>
<div class="abs" style="left:0.00px;top:173.00px;width:54.50px;height:33.50px;text-align:center;line-height:34.9px;font-size:15.7px;font-weight:normal;color:#333;padding-left:1px">4</div>
<div class="abs" style="left:0.00px;top:237.00px;width:54.50px;height:1.00px;background:#a3a3a3"></div>
<div class="abs" style="left:0.00px;top:208.00px;width:54.50px;height:30.00px;text-align:center;line-height:28.6px;font-size:15.7px;font-weight:normal;color:#333;padding-left:1px">5</div>
<div class="abs" style="left:0.00px;top:268.00px;width:54.50px;height:1.00px;background:#a3a3a3"></div>
<div class="abs" style="left:0.00px;top:239.00px;width:54.50px;height:30.00px;text-align:center;line-height:28.6px;font-size:15.7px;font-weight:normal;color:#333;padding-left:1px">6</div>
<div class="abs" style="left:0.00px;top:299.00px;width:54.50px;height:1.00px;background:#a3a3a3"></div>
<div class="abs" style="left:0.00px;top:270.00px;width:54.50px;height:30.00px;text-align:center;line-height:28.6px;font-size:15.7px;font-weight:normal;color:#333;padding-left:1px">7</div>
<div class="abs" style="left:0.00px;top:330.00px;width:54.50px;height:1.00px;background:#a3a3a3"></div>
<div class="abs" style="left:0.00px;top:301.00px;width:54.50px;height:30.00px;text-align:center;line-height:28.6px;font-size:15.7px;font-weight:normal;color:#333;padding-left:1px">8</div>
<div class="abs" style="left:0.00px;top:361.00px;width:54.50px;height:1.00px;background:#a3a3a3"></div>
<div class="abs" style="left:0.00px;top:332.00px;width:54.50px;height:30.00px;text-align:center;line-height:28.6px;font-size:15.7px;font-weight:normal;color:#333;padding-left:1px">9</div>
<div class="abs" style="left:0.00px;top:392.00px;width:54.50px;height:1.00px;background:#a3a3a3"></div>
<div class="abs" style="left:0.00px;top:363.00px;width:54.50px;height:30.00px;text-align:center;line-height:28.6px;font-size:15.7px;font-weight:normal;color:#333;padding-left:1px">10</div>
<div class="abs" style="left:0.00px;top:423.00px;width:54.50px;height:1.00px;background:#a3a3a3"></div>
<div class="abs" style="left:0.00px;top:394.00px;width:54.50px;height:30.00px;text-align:center;line-height:28.6px;font-size:15.7px;font-weight:normal;color:#333;padding-left:1px">11</div>
<div class="abs" style="left:0.00px;top:446.00px;width:54.50px;height:1.00px;background:#a3a3a3"></div>
<div class="abs" style="left:0.00px;top:425.00px;width:54.50px;height:21.00px;text-align:center;line-height:21.8px;font-size:15.7px;font-weight:normal;color:#333;padding-left:1px">12</div>
<div class="abs" style="left:0.00px;top:469.05px;width:54.50px;height:1.00px;background:#a3a3a3"></div>
<div class="abs" style="left:0.00px;top:447.00px;width:54.50px;height:22.05px;text-align:center;line-height:22.8px;font-size:15.7px;font-weight:normal;color:#333;padding-left:1px">13</div>
<div class="abs" style="left:0.00px;top:492.10px;width:54.50px;height:1.00px;background:#a3a3a3"></div>
<div class="abs" style="left:0.00px;top:470.05px;width:54.50px;height:22.05px;text-align:center;line-height:22.9px;font-size:15.7px;font-weight:normal;color:#333;padding-left:1px">14</div>
<div class="abs" style="left:0.00px;top:515.15px;width:54.50px;height:1.00px;background:#a3a3a3"></div>
<div class="abs" style="left:0.00px;top:493.10px;width:54.50px;height:22.05px;text-align:center;line-height:22.8px;font-size:15.7px;font-weight:normal;color:#333;padding-left:1px">15</div>
<div class="abs" style="left:0.00px;top:538.20px;width:54.50px;height:1.00px;background:#a3a3a3"></div>
<div class="abs" style="left:0.00px;top:516.15px;width:54.50px;height:22.05px;text-align:center;line-height:22.9px;font-size:15.7px;font-weight:normal;color:#333;padding-left:1px">16</div>
<div class="abs" style="left:0.00px;top:561.25px;width:54.50px;height:1.00px;background:#a3a3a3"></div>
<div class="abs" style="left:0.00px;top:539.20px;width:54.50px;height:22.05px;text-align:center;line-height:22.8px;font-size:15.7px;font-weight:normal;color:#333;padding-left:1px">17</div>
<div class="abs" style="left:0.00px;top:584.30px;width:54.50px;height:1.00px;background:#a3a3a3"></div>
<div class="abs" style="left:0.00px;top:562.25px;width:54.50px;height:22.05px;text-align:center;line-height:22.8px;font-size:15.7px;font-weight:normal;color:#333;padding-left:1px">18</div>
<div class="abs" style="left:0.00px;top:607.35px;width:54.50px;height:1.00px;background:#a3a3a3"></div>
<div class="abs" style="left:0.00px;top:585.30px;width:54.50px;height:22.05px;text-align:center;line-height:22.9px;font-size:15.7px;font-weight:normal;color:#333;padding-left:1px">19</div>
<div class="abs" style="left:55.50px;top:80.00px;width:1593.00px;height:93.00px;background:#d9e2c1"></div>
<div class="abs" style="left:55.50px;top:173.00px;width:1593.00px;height:35.00px;background:#e0e810"></div>
<div class="abs" style="left:55.50px;top:208.00px;width:1593.00px;height:217.00px;background:#e7e7e7"></div>
<div class="abs" style="left:55.50px;top:80.00px;width:145.00px;height:92.00px;background:linear-gradient(90deg,#dfe8cf,#e9efdf)"></div>
<div class="abs" style="left:55.50px;top:106.90px;width:145.00px;height:40.80px;text-align:center;font-size:16px;letter-spacing:0.3px;font-weight:bold;color:#0c690c;white-space:nowrap;line-height:20.4px">Объект&nbsp;<br>планирования</div>
<div class="abs" style="left:201.50px;top:80.00px;width:146.00px;height:92.00px;background:linear-gradient(90deg,#d2dcb8,#dde5c9)"></div>
<div class="abs" style="left:201.50px;top:80.00px;width:146.00px;height:92.00px;text-align:center;font-size:16px;letter-spacing:0.3px;font-weight:bold;color:#0c690c;white-space:nowrap;line-height:94.2px">2018</div>
<div class="abs" style="left:348.50px;top:111.00px;width:145.00px;height:61.00px;background:linear-gradient(90deg,#d4deba,#dde5c8)"></div>
<div class="abs" style="left:348.50px;top:111.00px;width:145.00px;height:61.00px;text-align:center;font-size:16px;letter-spacing:0.3px;font-weight:bold;color:#0c690c;white-space:nowrap;line-height:63.2px">янв. 2018</div>
<div class="abs" style="left:494.50px;top:111.00px;width:584.00px;height:30.00px;background:#d9e3c3"></div>
<div class="abs" style="left:494.50px;top:111.00px;width:584.00px;height:30.00px;text-align:center;font-size:16px;letter-spacing:0.3px;font-weight:bold;color:#0c690c;white-space:nowrap;line-height:32.2px">янв. 2018</div>
<div class="abs" style="left:494.50px;top:142.00px;width:145.00px;height:30.00px;background:linear-gradient(90deg,#e9efdd,#f1f4ea)"></div>
<div class="abs" style="left:494.50px;top:142.00px;width:145.00px;height:30.00px;text-align:center;font-size:16px;letter-spacing:0.3px;font-weight:bold;color:#0c690c;white-space:nowrap;line-height:32.2px">Бюджет</div>
<div class="abs" style="left:640.50px;top:142.00px;width:146.00px;height:30.00px;background:linear-gradient(90deg,#e9efdd,#f1f4ea)"></div>
<div class="abs" style="left:640.50px;top:142.00px;width:146.00px;height:30.00px;text-align:center;font-size:16px;letter-spacing:0.3px;font-weight:bold;color:#0c690c;white-space:nowrap;line-height:32.2px">Исп-но</div>
<div class="abs" style="left:787.50px;top:142.00px;width:145.00px;height:30.00px;background:linear-gradient(90deg,#e9efdd,#f1f4ea)"></div>
<div class="abs" style="left:787.50px;top:142.00px;width:145.00px;height:30.00px;text-align:center;font-size:16px;letter-spacing:0.3px;font-weight:bold;color:#0c690c;white-space:nowrap;line-height:32.2px">Корр-ки</div>
<div class="abs" style="left:933.50px;top:142.00px;width:145.00px;height:30.00px;background:linear-gradient(90deg,#e9efdd,#f1f4ea)"></div>
<div class="abs" style="left:933.50px;top:142.00px;width:145.00px;height:30.00px;text-align:center;font-size:16px;letter-spacing:0.3px;font-weight:bold;color:#0c690c;white-space:nowrap;line-height:32.2px">Остаток</div>
<div class="abs" style="left:1079.50px;top:111.00px;width:146.00px;height:61.00px;background:linear-gradient(90deg,#d4deba,#dde5c8)"></div>
<div class="abs" style="left:1079.50px;top:111.00px;width:146.00px;height:61.00px;text-align:center;font-size:16px;letter-spacing:0.3px;font-weight:bold;color:#0c690c;white-space:nowrap;line-height:63.2px">фев. 2018</div>
<div class="abs" style="left:1226.50px;top:111.00px;width:584.00px;height:30.00px;background:#d9e3c3"></div>
<div class="abs" style="left:1226.50px;top:111.00px;width:584.00px;height:30.00px;text-align:center;font-size:16px;letter-spacing:0.3px;font-weight:bold;color:#0c690c;white-space:nowrap;line-height:32.2px">фев. 2018</div>
<div class="abs" style="left:1226.50px;top:142.00px;width:145.00px;height:30.00px;background:linear-gradient(90deg,#e9efdd,#f1f4ea)"></div>
<div class="abs" style="left:1226.50px;top:142.00px;width:145.00px;height:30.00px;text-align:center;font-size:16px;letter-spacing:0.3px;font-weight:bold;color:#0c690c;white-space:nowrap;line-height:32.2px">Бюджет</div>
<div class="abs" style="left:1372.50px;top:142.00px;width:145.00px;height:30.00px;background:linear-gradient(90deg,#e9efdd,#f1f4ea)"></div>
<div class="abs" style="left:1372.50px;top:142.00px;width:145.00px;height:30.00px;text-align:center;font-size:16px;letter-spacing:0.3px;font-weight:bold;color:#0c690c;white-space:nowrap;line-height:32.2px">Исп-но</div>
<div class="abs" style="left:1518.50px;top:142.00px;width:146.00px;height:30.00px;background:linear-gradient(90deg,#e9efdd,#f1f4ea)"></div>
<div class="abs" style="left:1518.50px;top:142.00px;width:146.00px;height:30.00px;text-align:center;font-size:16px;letter-spacing:0.3px;font-weight:bold;color:#0c690c;white-space:nowrap;line-height:32.2px">Корр-ки</div>
<div class="abs" style="left:1665.50px;top:142.00px;width:145.00px;height:30.00px;background:linear-gradient(90deg,#e9efdd,#f1f4ea)"></div>
<div class="abs" style="left:1665.50px;top:142.00px;width:145.00px;height:30.00px;text-align:center;font-size:16px;letter-spacing:0.3px;font-weight:bold;color:#0c690c;white-space:nowrap;line-height:32.2px">Остаток</div>
<div class="abs" style="left:348.50px;top:110.00px;width:1300.00px;height:1.00px;background:#a3ad93"></div>
<div class="abs" style="left:494.50px;top:141.00px;width:584.00px;height:1.00px;background:#a3ad93"></div>
<div class="abs" style="left:1226.50px;top:141.00px;width:422.00px;height:1.00px;background:#a3ad93"></div>
<div class="abs" style="left:200.50px;top:80.00px;width:1.00px;height:92.00px;background:#a3ad93"></div>
<div class="abs" style="left:347.50px;top:80.00px;width:1.00px;height:92.00px;background:#a3ad93"></div>
<div class="abs" style="left:493.50px;top:111.00px;width:1.00px;height:61.00px;background:#a3ad93"></div>
<div class="abs" style="left:1078.50px;top:111.00px;width:1.00px;height:61.00px;background:#a3ad93"></div>
<div class="abs" style="left:1225.50px;top:111.00px;width:1.00px;height:61.00px;background:#a3ad93"></div>
<div class="abs" style="left:639.50px;top:142.00px;width:1.00px;height:30.00px;background:#a3ad93"></div>
<div class="abs" style="left:786.50px;top:142.00px;width:1.00px;height:30.00px;background:#a3ad93"></div>
<div class="abs" style="left:932.50px;top:142.00px;width:1.00px;height:30.00px;background:#a3ad93"></div>
<div class="abs" style="left:1371.50px;top:142.00px;width:1.00px;height:30.00px;background:#a3ad93"></div>
<div class="abs" style="left:1517.50px;top:142.00px;width:1.00px;height:30.00px;background:#a3ad93"></div>
<div class="abs" style="left:1664.50px;top:142.00px;width:1.00px;height:30.00px;background:#a3ad93"></div>
<div class="abs" style="left:55.50px;top:171.00px;width:1593.00px;height:1.00px;background:rgba(255,255,255,0.45)"></div>
<div class="abs" style="left:55.50px;top:172.00px;width:1593.00px;height:1.00px;background:#8f9572"></div>
<div class="abs" style="left:55.50px;top:173.00px;width:145.00px;height:33.60px;background:linear-gradient(90deg,#c4cb0f,#d6dd12 45%,#dfe614)"></div>
<div class="abs" style="left:55.50px;top:173.00px;width:131.50px;height:34.00px;text-align:right;line-height:32.6px;font-size:19.8px;font-weight:bold;color:#3a361c;white-space:nowrap">Итого:</div>
<div class="abs" style="left:200.50px;top:173.00px;width:1.00px;height:33.60px;background:#b3b72a"></div>
<div class="abs" style="left:201.50px;top:173.00px;width:146.00px;height:33.60px;background:linear-gradient(90deg,#c9d011,#d9e012)"></div>
<div class="abs" style="left:201.50px;top:173.00px;width:142.40px;height:34.00px;text-align:right;line-height:32.6px;font-size:19.8px;font-weight:bold;color:#3a361c;white-space:nowrap">227 425 000,00</div>
<div class="abs" style="left:347.50px;top:173.00px;width:1.00px;height:33.60px;background:#b3b72a"></div>
<div class="abs" style="left:348.50px;top:173.00px;width:145.00px;height:33.60px;background:linear-gradient(90deg,#d3db10,#e1e912)"></div>
<div class="abs" style="left:348.50px;top:173.00px;width:141.40px;height:34.00px;text-align:right;line-height:32.6px;font-size:19.8px;font-weight:bold;color:#3a361c;white-space:nowrap">17 112 500,00</div>
<div class="abs" style="left:493.50px;top:173.00px;width:1.00px;height:33.60px;background:#b3b72a"></div>
<div class="abs" style="left:494.50px;top:173.00px;width:141.40px;height:34.00px;text-align:right;line-height:32.6px;font-size:19.8px;font-weight:bold;color:#3a361c;white-space:nowrap">18 937 500,00</div>
<div class="abs" style="left:639.50px;top:173.00px;width:1.00px;height:33.60px;background:#b3b72a"></div>
<div class="abs" style="left:640.50px;top:173.00px;width:142.40px;height:34.00px;text-align:right;line-height:32.6px;font-size:19.8px;font-weight:bold;color:#3a361c;white-space:nowrap">0,00</div>
<div class="abs" style="left:786.50px;top:173.00px;width:1.00px;height:33.60px;background:#b3b72a"></div>
<div class="abs" style="left:787.50px;top:173.00px;width:141.40px;height:34.00px;text-align:right;line-height:32.6px;font-size:19.8px;font-weight:bold;color:#e8150c;white-space:nowrap">-1 825 000,00</div>
<div class="abs" style="left:932.50px;top:173.00px;width:1.00px;height:33.60px;background:#b3b72a"></div>
<div class="abs" style="left:933.50px;top:173.00px;width:141.40px;height:34.00px;text-align:right;line-height:32.6px;font-size:19.8px;font-weight:bold;color:#3a361c;white-space:nowrap">17 112 500,00</div>
<div class="abs" style="left:1078.50px;top:173.00px;width:1.00px;height:33.60px;background:#b3b72a"></div>
<div class="abs" style="left:1079.50px;top:173.00px;width:146.00px;height:33.60px;background:linear-gradient(90deg,#c9d011,#d9e012)"></div>
<div class="abs" style="left:1079.50px;top:173.00px;width:142.40px;height:34.00px;text-align:right;line-height:32.6px;font-size:19.8px;font-weight:bold;color:#3a361c;white-space:nowrap">20 937 500,00</div>
<div class="abs" style="left:1225.50px;top:173.00px;width:1.00px;height:33.60px;background:#b3b72a"></div>
<div class="abs" style="left:1226.50px;top:173.00px;width:141.40px;height:34.00px;text-align:right;line-height:32.6px;font-size:19.8px;font-weight:bold;color:#3a361c;white-space:nowrap">18 937 500,00</div>
<div class="abs" style="left:1371.50px;top:173.00px;width:1.00px;height:33.60px;background:#b3b72a"></div>
<div class="abs" style="left:1372.50px;top:173.00px;width:141.40px;height:34.00px;text-align:right;line-height:32.6px;font-size:19.8px;font-weight:bold;color:#3a361c;white-space:nowrap">0,00</div>
<div class="abs" style="left:1517.50px;top:173.00px;width:1.00px;height:33.60px;background:#b3b72a"></div>
<div class="abs" style="left:1518.50px;top:173.00px;width:142.40px;height:34.00px;text-align:right;line-height:32.6px;font-size:19.8px;font-weight:bold;color:#3a361c;white-space:nowrap">2 000 000,00</div>
<div class="abs" style="left:1664.50px;top:173.00px;width:1.00px;height:33.60px;background:#b3b72a"></div>
<div class="abs" style="left:1665.50px;top:173.00px;width:141.40px;height:34.00px;text-align:right;line-height:32.6px;font-size:19.8px;font-weight:bold;color:#3a361c;white-space:nowrap">20 937 500,00</div>
<div class="abs" style="left:1810.50px;top:173.00px;width:1.00px;height:33.60px;background:#b3b72a"></div>
<div class="abs" style="left:55.50px;top:206.50px;width:1593.00px;height:1.10px;background:#9a9c78"></div>
<div class="abs" style="left:55.50px;top:207.60px;width:145.00px;height:217.40px;background:linear-gradient(90deg,#d8e2c2,#e3ebd2)"></div>
<div class="abs" style="left:201.50px;top:207.60px;width:146.00px;height:217.40px;background:linear-gradient(90deg,#bcc7a4,#c9d2b3)"></div>
<div class="abs" style="left:348.50px;top:207.60px;width:145.00px;height:217.40px;background:linear-gradient(90deg,#d2ddb6,#dde6c6)"></div>
<div class="abs" style="left:1079.50px;top:207.60px;width:146.00px;height:217.40px;background:linear-gradient(90deg,#d2ddb6,#dde6c6)"></div>
<div class="abs" style="left:55.50px;top:237.00px;width:145.00px;height:1.00px;background:#a3aa92"></div>
<div class="abs" style="left:200.50px;top:237.00px;width:1448.00px;height:2.00px;background:#a1a1a1"></div>
<div class="abs" style="left:55.50px;top:268.00px;width:145.00px;height:1.00px;background:#a3aa92"></div>
<div class="abs" style="left:200.50px;top:268.00px;width:1448.00px;height:2.00px;background:#a1a1a1"></div>
<div class="abs" style="left:55.50px;top:299.00px;width:145.00px;height:1.00px;background:#a3aa92"></div>
<div class="abs" style="left:200.50px;top:299.00px;width:1448.00px;height:2.00px;background:#a1a1a1"></div>
<div class="abs" style="left:55.50px;top:330.00px;width:145.00px;height:1.00px;background:#a3aa92"></div>
<div class="abs" style="left:200.50px;top:330.00px;width:1448.00px;height:2.00px;background:#a1a1a1"></div>
<div class="abs" style="left:55.50px;top:361.00px;width:145.00px;height:1.00px;background:#a3aa92"></div>
<div class="abs" style="left:200.50px;top:361.00px;width:1448.00px;height:2.00px;background:#a1a1a1"></div>
<div class="abs" style="left:55.50px;top:392.00px;width:145.00px;height:1.00px;background:#a3aa92"></div>
<div class="abs" style="left:200.50px;top:392.00px;width:1448.00px;height:2.00px;background:#a1a1a1"></div>
<div class="abs" style="left:55.50px;top:423.00px;width:145.00px;height:1.00px;background:#a3aa92"></div>
<div class="abs" style="left:200.50px;top:423.00px;width:1448.00px;height:2.00px;background:#a1a1a1"></div>
<div class="abs" style="left:200.50px;top:207.60px;width:2.00px;height:217.40px;background:#a1a1a1"></div>
<div class="abs" style="left:347.50px;top:207.60px;width:2.00px;height:217.40px;background:#a1a1a1"></div>
<div class="abs" style="left:493.50px;top:207.60px;width:2.00px;height:217.40px;background:#a1a1a1"></div>
<div class="abs" style="left:639.50px;top:207.60px;width:2.00px;height:217.40px;background:#a1a1a1"></div>
<div class="abs" style="left:786.50px;top:207.60px;width:2.00px;height:217.40px;background:#a1a1a1"></div>
<div class="abs" style="left:932.50px;top:207.60px;width:2.00px;height:217.40px;background:#a1a1a1"></div>
<div class="abs" style="left:1078.50px;top:207.60px;width:2.00px;height:217.40px;background:#a1a1a1"></div>
<div class="abs" style="left:1225.50px;top:207.60px;width:2.00px;height:217.40px;background:#a1a1a1"></div>
<div class="abs" style="left:1371.50px;top:207.60px;width:2.00px;height:217.40px;background:#a1a1a1"></div>
<div class="abs" style="left:1517.50px;top:207.60px;width:2.00px;height:217.40px;background:#a1a1a1"></div>
<div class="abs" style="left:1664.50px;top:207.60px;width:2.00px;height:217.40px;background:#a1a1a1"></div>
<div class="abs" style="left:1810.50px;top:207.60px;width:2.00px;height:217.40px;background:#a1a1a1"></div>
<div class="abs" style="left:59.20px;top:208.00px;width:141.30px;height:29.00px;overflow:hidden;line-height:28.4px;font-size:15.4px;letter-spacing:0.62px;color:#3a3a3a;white-space:nowrap">Интернет</div>
<div class="abs" style="left:202.50px;top:208.00px;width:141.30px;height:29.00px;text-align:right;line-height:28.4px;font-size:15.4px;color:#3a3a3a;white-space:nowrap">0,00</div>
<div class="abs" style="left:349.50px;top:208.00px;width:140.30px;height:29.00px;text-align:right;line-height:28.4px;font-size:15.4px;color:#3a3a3a;white-space:nowrap">0,00</div>
<div class="abs" style="left:495.50px;top:208.00px;width:140.30px;height:29.00px;text-align:right;line-height:28.4px;font-size:15.4px;color:#3a3a3a;white-space:nowrap">0,00</div>
<div class="abs" style="left:641.50px;top:208.00px;width:141.30px;height:29.00px;text-align:right;line-height:28.4px;font-size:15.4px;color:#3a3a3a;white-space:nowrap">0,00</div>
<div class="abs" style="left:788.50px;top:208.00px;width:140.30px;height:29.00px;text-align:right;line-height:28.4px;font-size:15.4px;color:#3a3a3a;white-space:nowrap">0,00</div>
<div class="abs" style="left:934.50px;top:208.00px;width:140.30px;height:29.00px;text-align:right;line-height:28.4px;font-size:15.4px;color:#3a3a3a;white-space:nowrap">0,00</div>
<div class="abs" style="left:1080.50px;top:208.00px;width:141.30px;height:29.00px;text-align:right;line-height:28.4px;font-size:15.4px;color:#3a3a3a;white-space:nowrap">0,00</div>
<div class="abs" style="left:1227.50px;top:208.00px;width:140.30px;height:29.00px;text-align:right;line-height:28.4px;font-size:15.4px;color:#3a3a3a;white-space:nowrap">0,00</div>
<div class="abs" style="left:1373.50px;top:208.00px;width:140.30px;height:29.00px;text-align:right;line-height:28.4px;font-size:15.4px;color:#3a3a3a;white-space:nowrap">0,00</div>
<div class="abs" style="left:1519.50px;top:208.00px;width:141.30px;height:29.00px;text-align:right;line-height:28.4px;font-size:15.4px;color:#3a3a3a;white-space:nowrap">0,00</div>
<div class="abs" style="left:1666.50px;top:208.00px;width:140.30px;height:29.00px;text-align:right;line-height:28.4px;font-size:15.4px;color:#3a3a3a;white-space:nowrap">0,00</div>
<div class="abs" style="left:59.20px;top:239.00px;width:141.30px;height:29.00px;overflow:hidden;line-height:28.4px;font-size:15.4px;letter-spacing:0.62px;color:#3a3a3a;white-space:nowrap">Телефонные услуги</div>
<div class="abs" style="left:202.50px;top:239.00px;width:141.30px;height:29.00px;text-align:right;line-height:28.4px;font-size:15.4px;color:#3a3a3a;white-space:nowrap">150 000,00</div>
<div class="abs" style="left:349.50px;top:239.00px;width:140.30px;height:29.00px;text-align:right;line-height:28.4px;font-size:15.4px;color:#3a3a3a;white-space:nowrap">150 000,00</div>
<div class="abs" style="left:495.50px;top:239.00px;width:140.30px;height:29.00px;text-align:right;line-height:28.4px;font-size:15.4px;color:#3a3a3a;white-space:nowrap">0,00</div>
<div class="abs" style="left:641.50px;top:239.00px;width:141.30px;height:29.00px;text-align:right;line-height:28.4px;font-size:15.4px;color:#3a3a3a;white-space:nowrap">0,00</div>
<div class="abs" style="left:788.50px;top:239.00px;width:140.30px;height:29.00px;text-align:right;line-height:28.4px;font-size:15.4px;color:#3a3a3a;white-space:nowrap">150 000,00</div>
<div class="abs" style="left:934.50px;top:239.00px;width:140.30px;height:29.00px;text-align:right;line-height:28.4px;font-size:15.4px;color:#3a3a3a;white-space:nowrap">150 000,00</div>
<div class="abs" style="left:1080.50px;top:239.00px;width:141.30px;height:29.00px;text-align:right;line-height:28.4px;font-size:15.4px;color:#3a3a3a;white-space:nowrap">0,00</div>
<div class="abs" style="left:1227.50px;top:239.00px;width:140.30px;height:29.00px;text-align:right;line-height:28.4px;font-size:15.4px;color:#3a3a3a;white-space:nowrap">0,00</div>
<div class="abs" style="left:1373.50px;top:239.00px;width:140.30px;height:29.00px;text-align:right;line-height:28.4px;font-size:15.4px;color:#3a3a3a;white-space:nowrap">0,00</div>
<div class="abs" style="left:1519.50px;top:239.00px;width:141.30px;height:29.00px;text-align:right;line-height:28.4px;font-size:15.4px;color:#3a3a3a;white-space:nowrap">0,00</div>
<div class="abs" style="left:1666.50px;top:239.00px;width:140.30px;height:29.00px;text-align:right;line-height:28.4px;font-size:15.4px;color:#3a3a3a;white-space:nowrap">0,00</div>
<div class="abs" style="left:59.20px;top:270.00px;width:141.30px;height:29.00px;overflow:hidden;line-height:28.4px;font-size:15.4px;letter-spacing:0.62px;color:#3a3a3a;white-space:nowrap">Электроэнергия</div>
<div class="abs" style="left:202.50px;top:270.00px;width:141.30px;height:29.00px;text-align:right;line-height:28.4px;font-size:15.4px;color:#3a3a3a;white-space:nowrap">12 600 000,00</div>
<div class="abs" style="left:349.50px;top:270.00px;width:140.30px;height:29.00px;text-align:right;line-height:28.4px;font-size:15.4px;color:#3a3a3a;white-space:nowrap">1 050 000,00</div>
<div class="abs" style="left:495.50px;top:270.00px;width:140.30px;height:29.00px;text-align:right;line-height:28.4px;font-size:15.4px;color:#3a3a3a;white-space:nowrap">1 050 000,00</div>
<div class="abs" style="left:641.50px;top:270.00px;width:141.30px;height:29.00px;text-align:right;line-height:28.4px;font-size:15.4px;color:#3a3a3a;white-space:nowrap">0,00</div>
<div class="abs" style="left:788.50px;top:270.00px;width:140.30px;height:29.00px;text-align:right;line-height:28.4px;font-size:15.4px;color:#3a3a3a;white-space:nowrap">0,00</div>
<div class="abs" style="left:934.50px;top:270.00px;width:140.30px;height:29.00px;text-align:right;line-height:28.4px;font-size:15.4px;color:#3a3a3a;white-space:nowrap">1 050 000,00</div>
<div class="abs" style="left:1080.50px;top:270.00px;width:141.30px;height:29.00px;text-align:right;line-height:28.4px;font-size:15.4px;color:#3a3a3a;white-space:nowrap">1 050 000,00</div>
<div class="abs" style="left:1227.50px;top:270.00px;width:140.30px;height:29.00px;text-align:right;line-height:28.4px;font-size:15.4px;color:#3a3a3a;white-space:nowrap">1 050 000,00</div>
<div class="abs" style="left:1373.50px;top:270.00px;width:140.30px;height:29.00px;text-align:right;line-height:28.4px;font-size:15.4px;color:#3a3a3a;white-space:nowrap">0,00</div>
<div class="abs" style="left:1519.50px;top:270.00px;width:141.30px;height:29.00px;text-align:right;line-height:28.4px;font-size:15.4px;color:#3a3a3a;white-space:nowrap">0,00</div>
<div class="abs" style="left:1666.50px;top:270.00px;width:140.30px;height:29.00px;text-align:right;line-height:28.4px;font-size:15.4px;color:#3a3a3a;white-space:nowrap">1 050 000,00</div>
<div class="abs" style="left:59.20px;top:301.00px;width:141.30px;height:29.00px;overflow:hidden;line-height:28.4px;font-size:15.4px;letter-spacing:0.62px;color:#3a3a3a;white-space:nowrap">ГСМ</div>
<div class="abs" style="left:202.50px;top:301.00px;width:141.30px;height:29.00px;text-align:right;line-height:28.4px;font-size:15.4px;color:#3a3a3a;white-space:nowrap">3 175 000,00</div>
<div class="abs" style="left:349.50px;top:301.00px;width:140.30px;height:29.00px;text-align:right;line-height:28.4px;font-size:15.4px;color:#3a3a3a;white-space:nowrap">287 500,00</div>
<div class="abs" style="left:495.50px;top:301.00px;width:140.30px;height:29.00px;text-align:right;line-height:28.4px;font-size:15.4px;color:#3a3a3a;white-space:nowrap">262 500,00</div>
<div class="abs" style="left:641.50px;top:301.00px;width:141.30px;height:29.00px;text-align:right;line-height:28.4px;font-size:15.4px;color:#3a3a3a;white-space:nowrap">0,00</div>
<div class="abs" style="left:788.50px;top:301.00px;width:140.30px;height:29.00px;text-align:right;line-height:28.4px;font-size:15.4px;color:#3a3a3a;white-space:nowrap">25 000,00</div>
<div class="abs" style="left:934.50px;top:301.00px;width:140.30px;height:29.00px;text-align:right;line-height:28.4px;font-size:15.4px;color:#3a3a3a;white-space:nowrap">287 500,00</div>
<div class="abs" style="left:1080.50px;top:301.00px;width:141.30px;height:29.00px;text-align:right;line-height:28.4px;font-size:15.4px;color:#3a3a3a;white-space:nowrap">262 500,00</div>
<div class="abs" style="left:1227.50px;top:301.00px;width:140.30px;height:29.00px;text-align:right;line-height:28.4px;font-size:15.4px;color:#3a3a3a;white-space:nowrap">262 500,00</div>
<div class="abs" style="left:1373.50px;top:301.00px;width:140.30px;height:29.00px;text-align:right;line-height:28.4px;font-size:15.4px;color:#3a3a3a;white-space:nowrap">0,00</div>
<div class="abs" style="left:1519.50px;top:301.00px;width:141.30px;height:29.00px;text-align:right;line-height:28.4px;font-size:15.4px;color:#3a3a3a;white-space:nowrap">0,00</div>
<div class="abs" style="left:1666.50px;top:301.00px;width:140.30px;height:29.00px;text-align:right;line-height:28.4px;font-size:15.4px;color:#3a3a3a;white-space:nowrap">262 500,00</div>
<div class="abs" style="left:59.20px;top:332.00px;width:141.30px;height:29.00px;overflow:hidden;line-height:28.4px;font-size:15.4px;letter-spacing:0.62px;color:#3a3a3a;white-space:nowrap">Ремонт и ТО транспорта</div>
<div class="abs" style="left:202.50px;top:332.00px;width:141.30px;height:29.00px;text-align:right;line-height:28.4px;font-size:15.4px;color:#3a3a3a;white-space:nowrap">49 500 000,00</div>
<div class="abs" style="left:349.50px;top:332.00px;width:140.30px;height:29.00px;text-align:right;line-height:28.4px;font-size:15.4px;color:#3a3a3a;white-space:nowrap">2 125 000,00</div>
<div class="abs" style="left:495.50px;top:332.00px;width:140.30px;height:29.00px;text-align:right;line-height:28.4px;font-size:15.4px;color:#3a3a3a;white-space:nowrap">4 125 000,00</div>
<div class="abs" style="left:641.50px;top:332.00px;width:141.30px;height:29.00px;text-align:right;line-height:28.4px;font-size:15.4px;color:#3a3a3a;white-space:nowrap">0,00</div>
<div class="abs" style="left:788.50px;top:332.00px;width:140.30px;height:29.00px;text-align:right;line-height:28.4px;font-size:15.4px;color:#e8150c;white-space:nowrap">-2 000 000,00</div>
<div class="abs" style="left:934.50px;top:332.00px;width:140.30px;height:29.00px;text-align:right;line-height:28.4px;font-size:15.4px;color:#3a3a3a;white-space:nowrap">2 125 000,00</div>
<div class="abs" style="left:1080.50px;top:332.00px;width:141.30px;height:29.00px;text-align:right;line-height:28.4px;font-size:15.4px;color:#3a3a3a;white-space:nowrap">6 125 000,00</div>
<div class="abs" style="left:1227.50px;top:332.00px;width:140.30px;height:29.00px;text-align:right;line-height:28.4px;font-size:15.4px;color:#3a3a3a;white-space:nowrap">4 125 000,00</div>
<div class="abs" style="left:1373.50px;top:332.00px;width:140.30px;height:29.00px;text-align:right;line-height:28.4px;font-size:15.4px;color:#3a3a3a;white-space:nowrap">0,00</div>
<div class="abs" style="left:1519.50px;top:332.00px;width:141.30px;height:29.00px;text-align:right;line-height:28.4px;font-size:15.4px;color:#3a3a3a;white-space:nowrap">2 000 000,00</div>
<div class="abs" style="left:1666.50px;top:332.00px;width:140.30px;height:29.00px;text-align:right;line-height:28.4px;font-size:15.4px;color:#3a3a3a;white-space:nowrap">6 125 000,00</div>
<div class="abs" style="left:59.20px;top:363.00px;width:141.30px;height:29.00px;overflow:hidden;line-height:28.4px;font-size:15.4px;letter-spacing:0.62px;color:#3a3a3a;white-space:nowrap">Лизинговые платежи</div>
<div class="abs" style="left:202.50px;top:363.00px;width:141.30px;height:29.00px;text-align:right;line-height:28.4px;font-size:15.4px;color:#3a3a3a;white-space:nowrap">144 000 000,00</div>
<div class="abs" style="left:349.50px;top:363.00px;width:140.30px;height:29.00px;text-align:right;line-height:28.4px;font-size:15.4px;color:#3a3a3a;white-space:nowrap">12 000 000,00</div>
<div class="abs" style="left:495.50px;top:363.00px;width:140.30px;height:29.00px;text-align:right;line-height:28.4px;font-size:15.4px;color:#3a3a3a;white-space:nowrap">12 000 000,00</div>
<div class="abs" style="left:641.50px;top:363.00px;width:141.30px;height:29.00px;text-align:right;line-height:28.4px;font-size:15.4px;color:#3a3a3a;white-space:nowrap">0,00</div>
<div class="abs" style="left:788.50px;top:363.00px;width:140.30px;height:29.00px;text-align:right;line-height:28.4px;font-size:15.4px;color:#3a3a3a;white-space:nowrap">0,00</div>
<div class="abs" style="left:934.50px;top:363.00px;width:140.30px;height:29.00px;text-align:right;line-height:28.4px;font-size:15.4px;color:#3a3a3a;white-space:nowrap">12 000 000,00</div>
<div class="abs" style="left:1080.50px;top:363.00px;width:141.30px;height:29.00px;text-align:right;line-height:28.4px;font-size:15.4px;color:#3a3a3a;white-space:nowrap">12 000 000,00</div>
<div class="abs" style="left:1227.50px;top:363.00px;width:140.30px;height:29.00px;text-align:right;line-height:28.4px;font-size:15.4px;color:#3a3a3a;white-space:nowrap">12 000 000,00</div>
<div class="abs" style="left:1373.50px;top:363.00px;width:140.30px;height:29.00px;text-align:right;line-height:28.4px;font-size:15.4px;color:#3a3a3a;white-space:nowrap">0,00</div>
<div class="abs" style="left:1519.50px;top:363.00px;width:141.30px;height:29.00px;text-align:right;line-height:28.4px;font-size:15.4px;color:#3a3a3a;white-space:nowrap">0,00</div>
<div class="abs" style="left:1666.50px;top:363.00px;width:140.30px;height:29.00px;text-align:right;line-height:28.4px;font-size:15.4px;color:#3a3a3a;white-space:nowrap">12 000 000,00</div>
<div class="abs" style="left:59.20px;top:394.00px;width:141.30px;height:29.00px;overflow:hidden;line-height:28.4px;font-size:15.4px;letter-spacing:0.62px;color:#3a3a3a;white-space:nowrap">Прочие расходы (внутр.)</div>
<div class="abs" style="left:202.50px;top:394.00px;width:141.30px;height:29.00px;text-align:right;line-height:28.4px;font-size:15.4px;color:#3a3a3a;white-space:nowrap">18 000 000,00</div>
<div class="abs" style="left:349.50px;top:394.00px;width:140.30px;height:29.00px;text-align:right;line-height:28.4px;font-size:15.4px;color:#3a3a3a;white-space:nowrap">1 500 000,00</div>
<div class="abs" style="left:495.50px;top:394.00px;width:140.30px;height:29.00px;text-align:right;line-height:28.4px;font-size:15.4px;color:#3a3a3a;white-space:nowrap">1 500 000,00</div>
<div class="abs" style="left:641.50px;top:394.00px;width:141.30px;height:29.00px;text-align:right;line-height:28.4px;font-size:15.4px;color:#3a3a3a;white-space:nowrap">0,00</div>
<div class="abs" style="left:788.50px;top:394.00px;width:140.30px;height:29.00px;text-align:right;line-height:28.4px;font-size:15.4px;color:#3a3a3a;white-space:nowrap">0,00</div>
<div class="abs" style="left:934.50px;top:394.00px;width:140.30px;height:29.00px;text-align:right;line-height:28.4px;font-size:15.4px;color:#3a3a3a;white-space:nowrap">1 500 000,00</div>
<div class="abs" style="left:1080.50px;top:394.00px;width:141.30px;height:29.00px;text-align:right;line-height:28.4px;font-size:15.4px;color:#3a3a3a;white-space:nowrap">1 500 000,00</div>
<div class="abs" style="left:1227.50px;top:394.00px;width:140.30px;height:29.00px;text-align:right;line-height:28.4px;font-size:15.4px;color:#3a3a3a;white-space:nowrap">1 500 000,00</div>
<div class="abs" style="left:1373.50px;top:394.00px;width:140.30px;height:29.00px;text-align:right;line-height:28.4px;font-size:15.4px;color:#3a3a3a;white-space:nowrap">0,00</div>
<div class="abs" style="left:1519.50px;top:394.00px;width:141.30px;height:29.00px;text-align:right;line-height:28.4px;font-size:15.4px;color:#3a3a3a;white-space:nowrap">0,00</div>
<div class="abs" style="left:1666.50px;top:394.00px;width:140.30px;height:29.00px;text-align:right;line-height:28.4px;font-size:15.4px;color:#3a3a3a;white-space:nowrap">1 500 000,00</div>
</div>
<div class="abs" style="left:111.5px;top:913px;width:1640px;height:10px;background:#fff"></div>
<div class="abs" style="left:139px;top:913px;width:1612px;height:10px;background:#d9d9d9;border-radius:5px 0 0 5px"></div>
<div class="abs" style="left:139px;top:913px;width:323px;height:10px;background:#a6a6a6;border-radius:5px"></div>
<svg class="abs" style="left:121px;top:914px" width="6" height="8" viewBox="0 0 6 8"><path d="M5.5 0.5 V7.5 L0.5 4 Z" fill="#c4c4c4"/></svg>
<div class="btn " style="left:96.0px;top:949.0px;width:50.0px;height:32.0px;"></div>
<div class="abs" style="left:159px;top:954px;width:190px;height:24px;border:1px solid #b4b4b4;border-radius:2px;background:#fff"></div>
<div class="abs" style="left:322px;top:955px;width:1px;height:23px;background:#b4b4b4"></div>
<div class="t" style="left:207.0px;top:958.5px;font-size:14px;color:#444;letter-spacing:0.35px;">Готовится</div>
<svg class="abs" style="left:330px;top:963px" width="10" height="6" viewBox="0 0 10 6"><path d="M0.5 0.5 H9.5 L5 5.5 Z" fill="#444"/></svg>
<div class="btn " style="left:362.0px;top:949.0px;width:48.0px;height:32.0px;"><span style="line-height:30px;color:#8b8b8b;font-size:14.5px;font-weight:bold">OK</span></div>
<div class="t" style="left:427.0px;top:957.0px;font-size:15.55px;color:#4040c8;">(Панель визирования объекта)</div>
<svg class="abs" style="left:111.0px;top:956.0px" width="20" height="20" viewBox="0 0 20 20">
<rect x="1" y="2.6" width="13" height="15.4" fill="#fbfbfb" stroke="#9a9a9a" stroke-width="1"/>
<path d="M3.4 6 H11.6 M3.4 8.8 H11.6 M3.4 11.6 H9" stroke="#b8b8b8" stroke-width="1"/>
<path d="M18 3 L15.8 1 L7.6 10.4 L6.8 13.8 L9.8 12.6 Z" fill="#e0a24a" stroke="#9c6a2c" stroke-width="0.8"/>
<path d="M18 3 L15.8 1 L14.2 2.8 L16.4 4.8 Z" fill="#c8503a"/>
</svg><svg class="abs" style="left:31.0px;top:80.0px" width="18" height="18" viewBox="0 0 18 18"><rect x="0.5" y="0.40" width="17.2" height="2.5" fill="#4a5361"/><rect x="0.5" y="5.25" width="17.2" height="2.5" fill="#4a5361"/><rect x="0.5" y="10.10" width="17.2" height="2.5" fill="#4a5361"/><rect x="0.5" y="14.95" width="17.2" height="2.5" fill="#4a5361"/></svg>
<svg class="abs" style="left:29.5px;top:141.5px" width="21" height="21" viewBox="0 0 21 21">
<rect x="0.5" y="0.5" width="20" height="20" fill="#dfe3ea"/>
<path d="M0.5 8 V0.5 H9" stroke="#58b030" stroke-width="1.6" fill="none"/>
<path d="M12 0.5 H20.5 V8" stroke="#f0a020" stroke-width="1.6" fill="none"/>
<path d="M0.5 12 V20.5 H9" stroke="#2050d0" stroke-width="1.6" fill="none"/>
<path d="M5.2 15.5 V7.2 Q5.2 4 8 4 Q10.6 4 10.6 7.2 V13.6 Q10.6 16.8 13.2 16.8 Q16 16.8 16 13.6 V5.2" stroke="#3c3c3c" stroke-width="2.6" fill="none" stroke-linecap="round"/>
</svg>
<svg class="abs" style="left:31.0px;top:206.0px" width="18" height="18" viewBox="0 0 18 18">
<circle cx="9" cy="9" r="8.8" fill="#4a4a4a"/>
<path d="M6.8 14 V4.6 H10 Q12.6 4.6 12.6 7 Q12.6 9.4 10 9.4 H5.4 M5.4 11.6 H10.4" stroke="#c9d3ee" stroke-width="1.4" fill="none"/>
</svg>
<svg class="abs" style="left:32.0px;top:267.0px" width="17" height="21" viewBox="0 0 17 21">
<rect x="0.8" y="5.8" width="15.5" height="14.2" fill="#474747"/>
<path d="M4.6 9.5 V4.4 Q4.6 1.4 8.5 1.4 Q12.4 1.4 12.4 4.4 V9.5" stroke="#474747" stroke-width="1.6" fill="none"/>
<path d="M5.9 8.2 V4.6 Q5.9 2.8 8.5 2.8 Q11.1 2.8 11.1 4.6 V8.2" stroke="#c9d3ee" stroke-width="1.2" fill="none"/>
</svg>
<svg class="abs" style="left:29.5px;top:330.5px" width="21" height="20" viewBox="0 0 21 20">
<path d="M0.5 1.6 H3.6 L4.6 4.4" stroke="#474747" stroke-width="1.7" fill="none"/>
<path d="M3.6 4 H20.2 L18.2 11.6 H4.6 Z" fill="#474747"/>
<path d="M4.6 11 V14.6 H18.4" stroke="#474747" stroke-width="1.6" fill="none"/>
<circle cx="6.6" cy="17.6" r="1.9" fill="#474747"/><circle cx="16" cy="17.6" r="1.9" fill="#474747"/>
</svg>
<svg class="abs" style="left:30.5px;top:394.0px" width="19" height="19" viewBox="0 0 19 19">
<rect x="0.8" y="0.6" width="7.8" height="6.6" fill="#474747"/><rect x="9.6" y="0.6" width="7.8" height="6.6" fill="#474747"/>
<rect x="0.8" y="8.2" width="7.8" height="6.6" fill="#474747"/><rect x="9.6" y="8.2" width="7.8" height="6.6" fill="#474747"/>
<rect x="0" y="16" width="18.4" height="2.2" fill="#474747"/>
</svg>
<svg class="abs" style="left:31.0px;top:457.0px" width="19" height="19" viewBox="0 0 19 19">
<path d="M0.5 18.6 V13 L9.2 6.6 V10.6 L17.8 4.8 V18.6 Z" fill="#474747"/>
<path d="M1.6 10.4 V0.8 H5.2 V7.8 Z" fill="#474747"/>
<path d="M6.6 6.6 V0.8 H9.6 L11 3.4 Z" fill="#474747"/>
</svg>
<svg class="abs" style="left:29.5px;top:523.0px" width="22" height="16" viewBox="0 0 22 16">
<path d="M0.6 1 H13.4 V12.2 H0.6 Z" fill="#474747"/>
<path d="M13.4 2.6 H17.6 Q20.4 4 20.8 8 V12.2 H13.4 Z" fill="#474747"/>
<path d="M15 4 H17.4 Q18.8 5 19.2 7 H15 Z" fill="#c8c0d8"/>
<circle cx="4.6" cy="12.6" r="2.6" fill="#474747" stroke="#a7b9e4" stroke-width="0.8"/><circle cx="16.2" cy="12.6" r="2.6" fill="#474747" stroke="#a7b9e4" stroke-width="0.8"/>
</svg>
<svg class="abs" style="left:32.0px;top:583.5px" width="17" height="19" viewBox="0 0 17 19">
<ellipse cx="8.4" cy="5.2" rx="3.9" ry="4.7" fill="#474747"/>
<path d="M0.8 18.4 V15.4 Q0.8 12.2 5.4 11 L8.4 12.6 L11.4 11 Q16 12.2 16 15.4 V18.4 Z" fill="#474747"/>
</svg>
<div class="t" style="left:30.6px;top:644.5px;font-size:10.5px;font-weight:bold;color:#444;letter-spacing:-0.2px">Д<span style="font-size:9px">т</span></div>
<div class="t" style="left:38px;top:654.8px;font-size:9.6px;font-weight:bold;color:#444;letter-spacing:-0.2px">К<span style="font-size:9px">т</span></div>
<svg class="abs" style="left:30.5px;top:712.5px" width="19" height="15" viewBox="0 0 19 15">
<rect x="1.8" y="3.2" width="3.4" height="9.6" fill="#474747"/><rect x="6.9" y="5.6" width="3.3" height="7.2" fill="#474747"/><rect x="12" y="0.5" width="3.7" height="12.3" fill="#474747"/>
<rect x="0.5" y="12.6" width="17.8" height="1.5" fill="#474747"/>
</svg>
<svg class="abs" style="left:30.5px;top:772.5px" width="18" height="20" viewBox="0 0 18 20">
<path d="M5.2 0.8 H17.2 V15.2" stroke="#474747" stroke-width="1.1" fill="none"/>
<path d="M3 3 H15.2 V17.4" stroke="#474747" stroke-width="1.1" fill="none"/>
<rect x="0.5" y="5" width="12.4" height="14.6" fill="#474747"/>
</svg>
<svg class="abs" style="left:30.1px;top:835.0px" width="20" height="20" viewBox="0 0 20 20"><path d="M15.60 10.00 L18.80 10.00" stroke="#474747" stroke-width="2.5"/><path d="M13.96 13.96 L16.22 16.22" stroke="#474747" stroke-width="2.5"/><path d="M10.00 15.60 L10.00 18.80" stroke="#474747" stroke-width="2.5"/><path d="M6.04 13.96 L3.78 16.22" stroke="#474747" stroke-width="2.5"/><path d="M4.40 10.00 L1.20 10.00" stroke="#474747" stroke-width="2.5"/><path d="M6.04 6.04 L3.78 3.78" stroke="#474747" stroke-width="2.5"/><path d="M10.00 4.40 L10.00 1.20" stroke="#474747" stroke-width="2.5"/><path d="M13.96 6.04 L16.22 3.78" stroke="#474747" stroke-width="2.5"/><circle cx="10" cy="10" r="5.4" fill="none" stroke="#474747" stroke-width="2.2"/></svg>
<svg class="abs" style="left:29.5px;top:897.2px" width="21" height="21" viewBox="0 0 21 21">
<rect x="0.5" y="0.5" width="20" height="20" fill="#fff"/>
<rect x="0.5" y="0.5" width="6" height="5" fill="#8fd060" opacity="0.9"/>
<path d="M0.5 8 V0.5 H9" stroke="#58b030" stroke-width="1.4" fill="none"/>
<path d="M12 0.5 H20.5 V8" stroke="#f0c020" stroke-width="1.4" fill="none"/>
<path d="M0.5 12 V20.5 H9" stroke="#2050d0" stroke-width="1.4" fill="none"/>
<path d="M10.5 1.8 L12.9 8 L19.6 8.2 L14.4 12.3 L16.2 18.8 L10.5 15 L4.8 18.8 L6.6 12.3 L1.4 8.2 L8.1 8 Z" fill="#111"/>
</svg>
<div class="abs" style="left:0;top:950px;width:80px;height:19.5px;overflow:hidden"><div class="abs" style="left:23px;top:4px;width:34px;height:34px;border-radius:50%;background:radial-gradient(circle at 50% 50%,#ffe04a 0,#ffe04a 60%,#f7c61e 62%,#ffd42c 70%,#ffd42c 100%)"></div></div>
<div class="abs" style="left:0;top:969px;width:80px;height:1px;background:#6f7ea8"></div>
<svg class="abs" style="left:34.5px;top:980.0px" width="12" height="7" viewBox="0 0 12 7"><path d="M0 0.2 H11.4 L5.7 7 Z" fill="#222"/></svg>
</body></html>
